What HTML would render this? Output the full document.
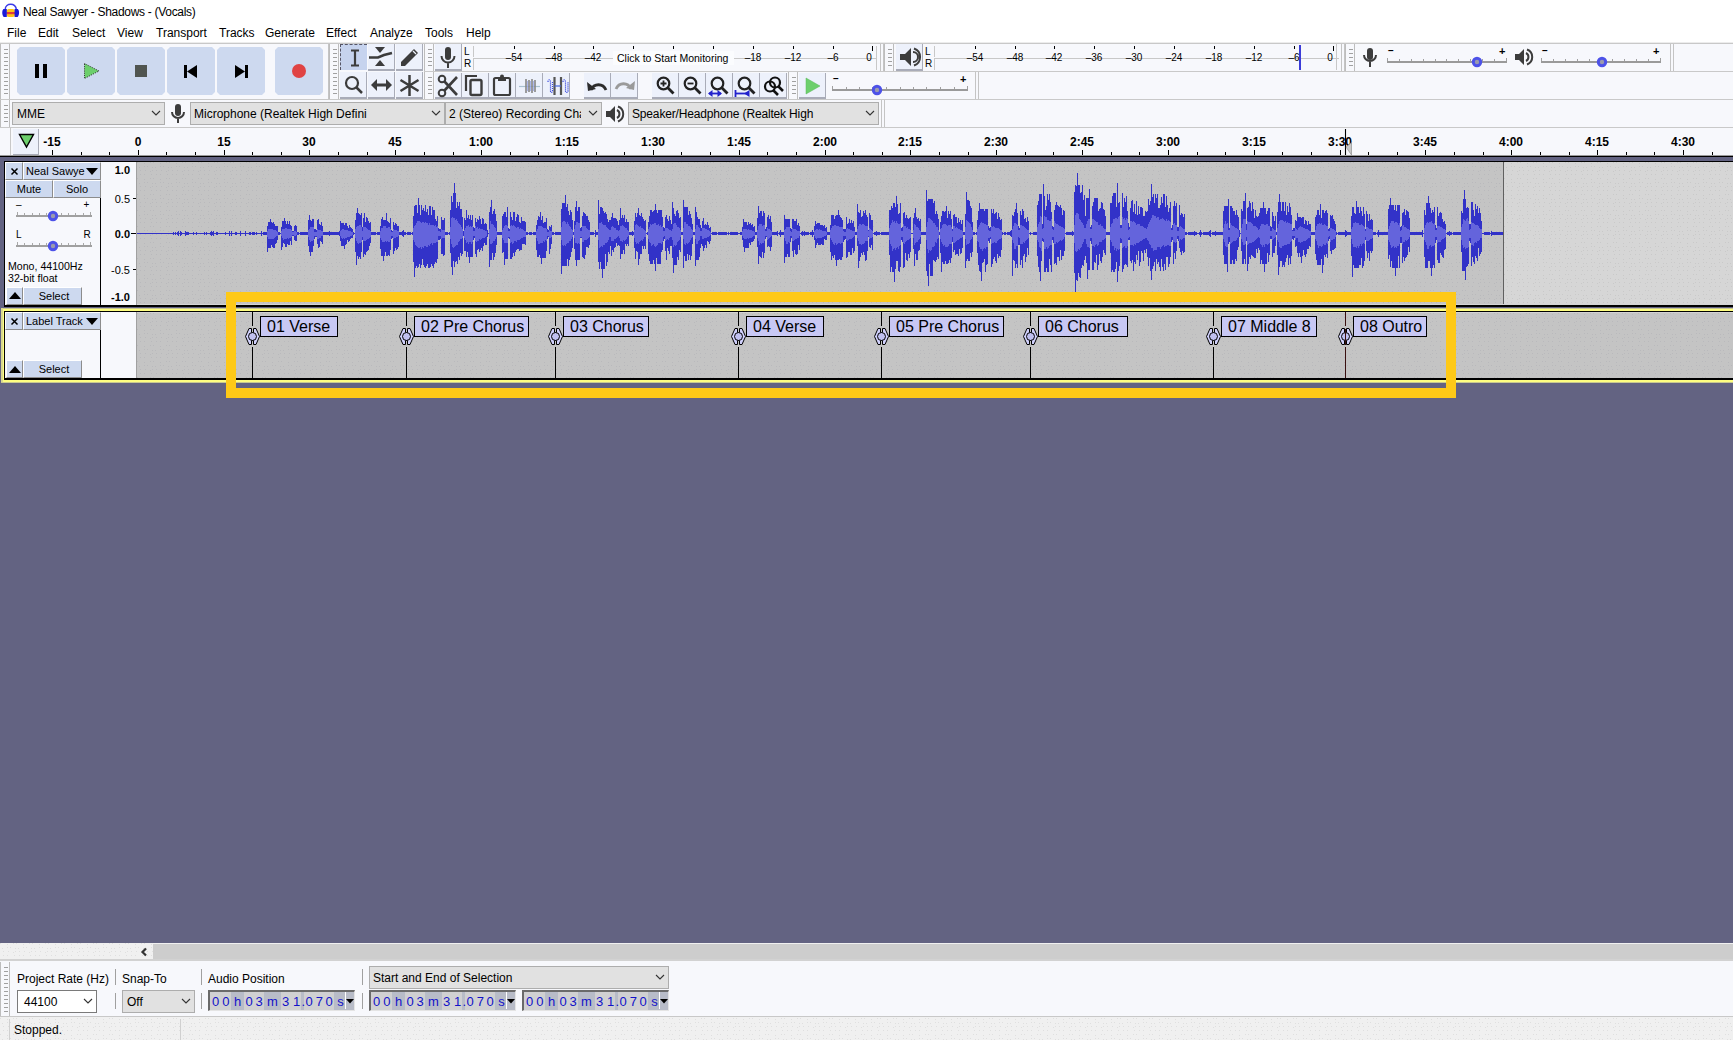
<!DOCTYPE html><html><head><meta charset='utf-8'><style>
*{box-sizing:border-box}
html,body{margin:0;padding:0}
body{width:1733px;height:1040px;overflow:hidden;position:relative;background:#636382;font-family:"Liberation Sans", sans-serif;color:#000}
.a{position:absolute}
.t{position:absolute;white-space:pre;line-height:1}
.btn{position:absolute;background:#cdd9ef;clip-path:polygon(3px 0,calc(100% - 3px) 0,100% 3px,100% calc(100% - 3px),calc(100% - 3px) 100%,3px 100%,0 calc(100% - 3px),0 3px)}
.tb{position:absolute;background:#edf1fb;border-right:1px solid #a9acb8;border-bottom:2px solid #a9acb8}
.grab{position:absolute;width:10px;border-left:1px solid #c8c8c8;border-right:2px solid #c8c8c8;background:repeating-linear-gradient(to bottom,transparent 0,transparent 2px,#9a9a9a 2px,#9a9a9a 3px,transparent 3px,transparent 4px);background-size:4px 100%;background-repeat:no-repeat;background-position:3px 0}
.combo{position:absolute;background:#e1e1e1;border:1px solid #adadad;font-size:12px}
.chev{position:absolute;width:6px;height:6px;border-right:1px solid #333;border-bottom:1px solid #333;transform:rotate(45deg)}
</style></head><body><div class='a' style='left:0;top:0;width:1733px;height:43px;background:#fff'></div><div class='t' style='left:23px;top:6px;font-size:12px;letter-spacing:-0.3px'>Neal Sawyer - Shadows - (Vocals)</div><svg class='a' style='left:1px;top:0px' width='20' height='18'><path d='M4.2 9.5 C4.2 2.5 15.3 2.5 15.3 9.5' stroke='#3a3ae8' stroke-width='1.5' fill='none'/><rect x='5.5' y='9' width='8.5' height='8' rx='2.5' fill='#fcc419'/><rect x='5.5' y='12' width='8.5' height='2.2' fill='#e0393e'/><path d='M2.5 9 C0.8 10.5 0.8 15 2.8 17 L5.8 17 L5.8 9 Z M16.8 9 C18.6 10.5 18.6 15 16.6 17 L13.6 17 L13.6 9 Z' fill='#1a1ad8'/></svg><div class='t' style='left:7px;top:27px;font-size:12px'>File</div><div class='t' style='left:38px;top:27px;font-size:12px'>Edit</div><div class='t' style='left:72px;top:27px;font-size:12px'>Select</div><div class='t' style='left:117px;top:27px;font-size:12px'>View</div><div class='t' style='left:156px;top:27px;font-size:12px'>Transport</div><div class='t' style='left:219px;top:27px;font-size:12px'>Tracks</div><div class='t' style='left:265px;top:27px;font-size:12px'>Generate</div><div class='t' style='left:326px;top:27px;font-size:12px'>Effect</div><div class='t' style='left:370px;top:27px;font-size:12px'>Analyze</div><div class='t' style='left:425px;top:27px;font-size:12px'>Tools</div><div class='t' style='left:466px;top:27px;font-size:12px'>Help</div><div class='a' style='left:0;top:43px;width:1733px;height:114px;background:#f7f8fc'></div><div class='a' style='left:0px;top:42px;width:1733px;height:1px;background:#ececec'></div><div class='a' style='left:0px;top:43px;width:1733px;height:1px;background:#c8c8c8'></div><div class='a' style='left:424px;top:71px;width:1309px;height:1px;background:#c9c9c9'></div><div class='a' style='left:0;top:99px;width:1733px;height:1px;background:#c9c9c9'></div><div class='a' style='left:0;top:127px;width:1733px;height:1px;background:#c9c9c9'></div><div class='a' style='left:0px;top:44px;width:10px;height:55px;border-left:1px solid #bdbdbd;border-right:1px solid #bdbdbd;'></div><div class='a' style='left:4px;top:49px;width:4px;height:1px;background:#a0a0a0'></div><div class='a' style='left:4px;top:53px;width:4px;height:1px;background:#a0a0a0'></div><div class='a' style='left:4px;top:57px;width:4px;height:1px;background:#a0a0a0'></div><div class='a' style='left:4px;top:61px;width:4px;height:1px;background:#a0a0a0'></div><div class='a' style='left:4px;top:65px;width:4px;height:1px;background:#a0a0a0'></div><div class='a' style='left:4px;top:69px;width:4px;height:1px;background:#a0a0a0'></div><div class='a' style='left:4px;top:73px;width:4px;height:1px;background:#a0a0a0'></div><div class='a' style='left:4px;top:77px;width:4px;height:1px;background:#a0a0a0'></div><div class='a' style='left:4px;top:81px;width:4px;height:1px;background:#a0a0a0'></div><div class='a' style='left:4px;top:85px;width:4px;height:1px;background:#a0a0a0'></div><div class='a' style='left:4px;top:89px;width:4px;height:1px;background:#a0a0a0'></div><div class='a' style='left:4px;top:93px;width:4px;height:1px;background:#a0a0a0'></div><div class='btn' style='left:17px;top:47px;width:48px;height:48px'></div><div class='btn' style='left:67px;top:47px;width:48px;height:48px'></div><div class='btn' style='left:117px;top:47px;width:48px;height:48px'></div><div class='btn' style='left:167px;top:47px;width:48px;height:48px'></div><div class='btn' style='left:217px;top:47px;width:48px;height:48px'></div><div class='btn' style='left:275px;top:47px;width:48px;height:48px'></div><div class='a' style='left:35px;top:64px;width:4px;height:14px;background:#000;'></div><div class='a' style='left:43px;top:64px;width:4px;height:14px;background:#000;'></div><svg class='a' style='left:83px;top:62px' width='18' height='18'><polygon points='1.5,1.5 16,9 1.5,16.5' fill='#6ccf6c' stroke='#333' stroke-width='1' stroke-dasharray='1,1.2'/></svg><div class='a' style='left:135px;top:65px;width:12px;height:12px;background:#505550;'></div><div class='a' style='left:184px;top:65px;width:3px;height:13px;background:#000;'></div><svg class='a' style='left:187px;top:65px' width='11' height='13'><polygon points='10,0 10,13 0,6.5' fill='#000'/></svg><svg class='a' style='left:235px;top:65px' width='11' height='13'><polygon points='0,0 0,13 10,6.5' fill='#000'/></svg><div class='a' style='left:245px;top:65px;width:3px;height:13px;background:#000;'></div><svg class='a' style='left:291px;top:63px' width='16' height='16'><circle cx='8' cy='8' r='7' fill='#e04343'/></svg><div class='a' style='left:328px;top:44px;width:2px;height:55px;background:#c4c4c4'></div><div class='a' style='left:329px;top:44px;width:10px;height:55px;border-left:1px solid #bdbdbd;border-right:1px solid #bdbdbd;'></div><div class='a' style='left:333px;top:49px;width:4px;height:1px;background:#a0a0a0'></div><div class='a' style='left:333px;top:53px;width:4px;height:1px;background:#a0a0a0'></div><div class='a' style='left:333px;top:57px;width:4px;height:1px;background:#a0a0a0'></div><div class='a' style='left:333px;top:61px;width:4px;height:1px;background:#a0a0a0'></div><div class='a' style='left:333px;top:65px;width:4px;height:1px;background:#a0a0a0'></div><div class='a' style='left:333px;top:69px;width:4px;height:1px;background:#a0a0a0'></div><div class='a' style='left:333px;top:73px;width:4px;height:1px;background:#a0a0a0'></div><div class='a' style='left:333px;top:77px;width:4px;height:1px;background:#a0a0a0'></div><div class='a' style='left:333px;top:81px;width:4px;height:1px;background:#a0a0a0'></div><div class='a' style='left:333px;top:85px;width:4px;height:1px;background:#a0a0a0'></div><div class='a' style='left:333px;top:89px;width:4px;height:1px;background:#a0a0a0'></div><div class='a' style='left:333px;top:93px;width:4px;height:1px;background:#a0a0a0'></div><div class='a' style='left:340px;top:44px;width:27px;height:26px;background:#c6d3ee;border-left:1px dashed #556;border-top:1px dashed #556'></div><div class='tb' style='left:368px;top:44px;width:27px;height:27px'></div><div class='tb' style='left:396px;top:44px;width:27px;height:27px'></div><div class='tb' style='left:340px;top:72px;width:27px;height:27px'></div><div class='tb' style='left:368px;top:72px;width:27px;height:27px'></div><div class='tb' style='left:396px;top:72px;width:27px;height:27px'></div><svg class='a' style='left:340px;top:44px' width='27' height='26'><path d='M11 6.5H19M11 21.5H19M15 6.5V21.5' stroke='#3c3c3c' stroke-width='2.2' fill='none'/></svg><svg class='a' style='left:368px;top:44px' width='27' height='27'><polygon points='7,3 17,3 12,9' fill='#3c3c3c'/><polygon points='7,22 17,22 12,16' fill='#3c3c3c'/><path d='M1 13.5 H10 L16 11 L24 9' stroke='#3c3c3c' stroke-width='2.5' fill='none'/></svg><svg class='a' style='left:396px;top:44px' width='27' height='27'><path d='M5 22 L5 18 L18 5 L22 9 L9 22 Z' fill='#3c3c3c'/><path d='M17 7 L20 10' stroke='#edf1fb' stroke-width='1.2'/></svg><svg class='a' style='left:340px;top:72px' width='27' height='27'><circle cx='12' cy='11' r='6' stroke='#3c3c3c' stroke-width='2.2' fill='none'/><path d='M16.5 15.5 L22 21' stroke='#3c3c3c' stroke-width='2.5'/></svg><svg class='a' style='left:368px;top:72px' width='27' height='27'><polygon points='3,13 9,7 9,19' fill='#3c3c3c'/><polygon points='24,13 18,7 18,19' fill='#3c3c3c'/><rect x='8' y='11.5' width='11' height='3' fill='#3c3c3c'/></svg><svg class='a' style='left:396px;top:72px' width='27' height='27'><path d='M13.5 3V24M4.5 8L22.5 19M22.5 8L4.5 19' stroke='#3c3c3c' stroke-width='2.5'/></svg><div class='a' style='left:424px;top:44px;width:10px;height:27px;border-left:1px solid #bdbdbd;border-right:1px solid #bdbdbd;'></div><div class='a' style='left:428px;top:49px;width:4px;height:1px;background:#a0a0a0'></div><div class='a' style='left:428px;top:53px;width:4px;height:1px;background:#a0a0a0'></div><div class='a' style='left:428px;top:57px;width:4px;height:1px;background:#a0a0a0'></div><div class='a' style='left:428px;top:61px;width:4px;height:1px;background:#a0a0a0'></div><div class='a' style='left:428px;top:65px;width:4px;height:1px;background:#a0a0a0'></div><div class='tb' style='left:435px;top:44px;width:27px;height:27px'></div><svg class='a' style='left:435px;top:44px' width='27' height='27'><rect x='10' y='3' width='6' height='13' rx='3' fill='#3c3c3c'/><path d='M6.5 12 A6.5 6.5 0 0 0 19.5 12 M13 19V24' stroke='#3c3c3c' stroke-width='2' fill='none'/></svg><div class='t' style='left:464px;top:47px;font-size:10px;'>L</div><div class='t' style='left:464px;top:59px;font-size:10px;'>R</div><div class='a' style='left:473px;top:46px;width:1px;height:11px;background:#c8c8c8'></div><div class='a' style='left:473px;top:59px;width:1px;height:11px;background:#c8c8c8'></div><div class='a' style='left:473px;top:58px;width:403px;height:1px;background:#c8c8c8'></div><div class='a' style='left:514px;top:46px;width:1px;height:3px;background:#000'></div><div class='t' style='left:499px;top:53px;width:30px;text-align:center;font-size:10px;background:transparent'>&#8211;54</div><div class='a' style='left:554px;top:46px;width:1px;height:3px;background:#000'></div><div class='t' style='left:539px;top:53px;width:30px;text-align:center;font-size:10px;background:transparent'>&#8211;48</div><div class='a' style='left:593px;top:46px;width:1px;height:3px;background:#000'></div><div class='t' style='left:578px;top:53px;width:30px;text-align:center;font-size:10px;background:transparent'>&#8211;42</div><div class='a' style='left:876px;top:46px;width:1px;height:24px;background:#c8c8c8'></div><div class='a' style='left:613px;top:51px;width:121px;height:14px;background:#fbfcfe;'></div><div class='t' style='left:617px;top:53px;font-size:10.5px;'>Click to Start Monitoring</div><div class='a' style='left:753px;top:46px;width:1px;height:3px;background:#000'></div><div class='t' style='left:738px;top:53px;width:30px;text-align:center;font-size:10px'>&#8211;18</div><div class='a' style='left:793px;top:46px;width:1px;height:3px;background:#000'></div><div class='t' style='left:778px;top:53px;width:30px;text-align:center;font-size:10px'>&#8211;12</div><div class='a' style='left:833px;top:46px;width:1px;height:3px;background:#000'></div><div class='t' style='left:818px;top:53px;width:30px;text-align:center;font-size:10px'>&#8211;6</div><div class='a' style='left:872px;top:46px;width:1px;height:5px;background:#000'></div><div class='t' style='left:854px;top:53px;width:30px;text-align:center;font-size:10px'>0</div><div class='a' style='left:633px;top:46px;width:1px;height:3px;background:#000'></div><div class='a' style='left:673px;top:46px;width:1px;height:3px;background:#000'></div><div class='a' style='left:713px;top:46px;width:1px;height:3px;background:#000'></div><div class='a' style='left:880px;top:44px;width:1px;height:27px;background:#c4c4c4'></div><div class='a' style='left:883px;top:44px;width:1px;height:27px;background:#c4c4c4'></div><div class='a' style='left:884px;top:44px;width:10px;height:27px;border-left:1px solid #bdbdbd;border-right:1px solid #bdbdbd;'></div><div class='a' style='left:888px;top:49px;width:4px;height:1px;background:#a0a0a0'></div><div class='a' style='left:888px;top:53px;width:4px;height:1px;background:#a0a0a0'></div><div class='a' style='left:888px;top:57px;width:4px;height:1px;background:#a0a0a0'></div><div class='a' style='left:888px;top:61px;width:4px;height:1px;background:#a0a0a0'></div><div class='a' style='left:888px;top:65px;width:4px;height:1px;background:#a0a0a0'></div><div class='tb' style='left:896px;top:44px;width:27px;height:27px'></div><svg class='a' style='left:896px;top:44px' width='27' height='27'><polygon points='4,10 9,10 15,4 15,22 9,16 4,16' fill='#3c3c3c'/><path d='M17 8 A5 5 0 0 1 17 18 M18 4.5 A9 9 0 0 1 18 21.5' stroke='#3c3c3c' stroke-width='2' fill='none'/></svg><div class='t' style='left:925px;top:47px;font-size:10px;'>L</div><div class='t' style='left:925px;top:59px;font-size:10px;'>R</div><div class='a' style='left:934px;top:46px;width:1px;height:11px;background:#c8c8c8'></div><div class='a' style='left:934px;top:59px;width:1px;height:11px;background:#c8c8c8'></div><div class='a' style='left:934px;top:58px;width:403px;height:1px;background:#c8c8c8'></div><div class='a' style='left:975px;top:46px;width:1px;height:3px;background:#000'></div><div class='t' style='left:960px;top:53px;width:30px;text-align:center;font-size:10px'>&#8211;54</div><div class='a' style='left:1015px;top:46px;width:1px;height:3px;background:#000'></div><div class='t' style='left:1000px;top:53px;width:30px;text-align:center;font-size:10px'>&#8211;48</div><div class='a' style='left:1054px;top:46px;width:1px;height:3px;background:#000'></div><div class='t' style='left:1039px;top:53px;width:30px;text-align:center;font-size:10px'>&#8211;42</div><div class='a' style='left:1094px;top:46px;width:1px;height:3px;background:#000'></div><div class='t' style='left:1079px;top:53px;width:30px;text-align:center;font-size:10px'>&#8211;36</div><div class='a' style='left:1134px;top:46px;width:1px;height:3px;background:#000'></div><div class='t' style='left:1119px;top:53px;width:30px;text-align:center;font-size:10px'>&#8211;30</div><div class='a' style='left:1174px;top:46px;width:1px;height:3px;background:#000'></div><div class='t' style='left:1159px;top:53px;width:30px;text-align:center;font-size:10px'>&#8211;24</div><div class='a' style='left:1214px;top:46px;width:1px;height:3px;background:#000'></div><div class='t' style='left:1199px;top:53px;width:30px;text-align:center;font-size:10px'>&#8211;18</div><div class='a' style='left:1254px;top:46px;width:1px;height:3px;background:#000'></div><div class='t' style='left:1239px;top:53px;width:30px;text-align:center;font-size:10px'>&#8211;12</div><div class='a' style='left:1294px;top:46px;width:1px;height:3px;background:#000'></div><div class='t' style='left:1279px;top:53px;width:30px;text-align:center;font-size:10px'>&#8211;6</div><div class='a' style='left:1333px;top:46px;width:1px;height:5px;background:#000'></div><div class='t' style='left:1315px;top:53px;width:30px;text-align:center;font-size:10px'>0</div><div class='a' style='left:1299px;top:45px;width:2px;height:25px;background:#3b3bd8'></div><div class='a' style='left:1336px;top:44px;width:1px;height:26px;background:#c8c8c8'></div><div class='a' style='left:1336px;top:58px;width:3px;height:1px;background:#c8c8c8'></div><div class='a' style='left:1341px;top:44px;width:1px;height:27px;background:#c4c4c4'></div><div class='a' style='left:1344px;top:44px;width:2px;height:27px;background:#c4c4c4'></div><div class='a' style='left:1345px;top:44px;width:10px;height:27px;border-left:1px solid #bdbdbd;border-right:1px solid #bdbdbd;'></div><div class='a' style='left:1349px;top:49px;width:4px;height:1px;background:#a0a0a0'></div><div class='a' style='left:1349px;top:53px;width:4px;height:1px;background:#a0a0a0'></div><div class='a' style='left:1349px;top:57px;width:4px;height:1px;background:#a0a0a0'></div><div class='a' style='left:1349px;top:61px;width:4px;height:1px;background:#a0a0a0'></div><div class='a' style='left:1349px;top:65px;width:4px;height:1px;background:#a0a0a0'></div><svg class='a' style='left:1361px;top:44px' width='18' height='27'><rect x='6' y='4' width='6' height='12' rx='3' fill='#3c3c3c'/><path d='M3 11 A6 6 0 0 0 15 11 M9 18V23' stroke='#3c3c3c' stroke-width='2' fill='none'/></svg><div class='a' style='left:1387px;top:61px;width:120px;height:2px;background:#9a9a9a'></div><div class='a' style='left:1387px;top:58px;width:1px;height:3px;background:#a0a0a0'></div><div class='a' style='left:1399px;top:59px;width:1px;height:2px;background:#a0a0a0'></div><div class='a' style='left:1411px;top:59px;width:1px;height:2px;background:#a0a0a0'></div><div class='a' style='left:1423px;top:59px;width:1px;height:2px;background:#a0a0a0'></div><div class='a' style='left:1435px;top:59px;width:1px;height:2px;background:#a0a0a0'></div><div class='a' style='left:1446px;top:59px;width:1px;height:2px;background:#a0a0a0'></div><div class='a' style='left:1458px;top:59px;width:1px;height:2px;background:#a0a0a0'></div><div class='a' style='left:1470px;top:59px;width:1px;height:2px;background:#a0a0a0'></div><div class='a' style='left:1482px;top:59px;width:1px;height:2px;background:#a0a0a0'></div><div class='a' style='left:1494px;top:59px;width:1px;height:2px;background:#a0a0a0'></div><div class='a' style='left:1506px;top:58px;width:1px;height:3px;background:#a0a0a0'></div><div class='t' style='left:1388px;top:46px;font-size:10px;font-weight:bold'>&#8211;</div><div class='t' style='left:1499px;top:45.5px;font-size:11px;font-weight:bold'>+</div><svg class='a' style='left:1471px;top:56px' width='12' height='12'><circle cx='6' cy='6' r='3.7' stroke='#4d52e8' stroke-width='3' fill='#9a9aae'/></svg><svg class='a' style='left:1512px;top:44px' width='22' height='27'><polygon points='3,10 7,10 12,5 12,21 7,16 3,16' fill='#3c3c3c'/><path d='M14 9 A4.5 4.5 0 0 1 14 17 M15 5.5 A8 8 0 0 1 15 20.5' stroke='#3c3c3c' stroke-width='2' fill='none'/></svg><div class='a' style='left:1541px;top:61px;width:120px;height:2px;background:#9a9a9a'></div><div class='a' style='left:1541px;top:58px;width:1px;height:3px;background:#a0a0a0'></div><div class='a' style='left:1553px;top:59px;width:1px;height:2px;background:#a0a0a0'></div><div class='a' style='left:1565px;top:59px;width:1px;height:2px;background:#a0a0a0'></div><div class='a' style='left:1577px;top:59px;width:1px;height:2px;background:#a0a0a0'></div><div class='a' style='left:1589px;top:59px;width:1px;height:2px;background:#a0a0a0'></div><div class='a' style='left:1600px;top:59px;width:1px;height:2px;background:#a0a0a0'></div><div class='a' style='left:1612px;top:59px;width:1px;height:2px;background:#a0a0a0'></div><div class='a' style='left:1624px;top:59px;width:1px;height:2px;background:#a0a0a0'></div><div class='a' style='left:1636px;top:59px;width:1px;height:2px;background:#a0a0a0'></div><div class='a' style='left:1648px;top:59px;width:1px;height:2px;background:#a0a0a0'></div><div class='a' style='left:1660px;top:58px;width:1px;height:3px;background:#a0a0a0'></div><div class='t' style='left:1542px;top:46px;font-size:10px;font-weight:bold'>&#8211;</div><div class='t' style='left:1653px;top:45.5px;font-size:11px;font-weight:bold'>+</div><svg class='a' style='left:1596px;top:56px' width='12' height='12'><circle cx='6' cy='6' r='3.7' stroke='#4d52e8' stroke-width='3' fill='#9a9aae'/></svg><div class='a' style='left:1670px;top:44px;width:1px;height:27px;background:#c4c4c4'></div><div class='a' style='left:1673px;top:44px;width:1px;height:27px;background:#c4c4c4'></div><div class='a' style='left:424px;top:72px;width:10px;height:27px;border-left:1px solid #bdbdbd;border-right:1px solid #bdbdbd;'></div><div class='a' style='left:428px;top:77px;width:4px;height:1px;background:#a0a0a0'></div><div class='a' style='left:428px;top:81px;width:4px;height:1px;background:#a0a0a0'></div><div class='a' style='left:428px;top:85px;width:4px;height:1px;background:#a0a0a0'></div><div class='a' style='left:428px;top:89px;width:4px;height:1px;background:#a0a0a0'></div><div class='a' style='left:428px;top:93px;width:4px;height:1px;background:#a0a0a0'></div><div class='tb' style='left:435px;top:73px;width:27px;height:26px'></div><div class='tb' style='left:462px;top:73px;width:27px;height:26px'></div><div class='tb' style='left:489px;top:73px;width:27px;height:26px'></div><div class='tb' style='left:516px;top:73px;width:27px;height:26px'></div><div class='tb' style='left:543px;top:73px;width:27px;height:26px'></div><div class='tb' style='left:584px;top:73px;width:27px;height:26px'></div><div class='tb' style='left:611px;top:73px;width:27px;height:26px'></div><div class='tb' style='left:652px;top:73px;width:27px;height:26px'></div><div class='tb' style='left:679px;top:73px;width:27px;height:26px'></div><div class='tb' style='left:706px;top:73px;width:27px;height:26px'></div><div class='tb' style='left:733px;top:73px;width:27px;height:26px'></div><div class='tb' style='left:760px;top:73px;width:27px;height:26px'></div><svg class='a' style='left:435px;top:73px' width='27' height='26'><circle cx='7' cy='6' r='3.3' stroke='#3c3c3c' stroke-width='2' fill='none'/><circle cx='7' cy='20' r='3.3' stroke='#3c3c3c' stroke-width='2' fill='none'/><path d='M9.5 8.5 L22 22 M9.5 17.5 L22 4' stroke='#3c3c3c' stroke-width='2.6'/></svg><svg class='a' style='left:462px;top:73px' width='27' height='26'><path d='M4 18 V3 H15' stroke='#3c3c3c' stroke-width='2.2' fill='none'/><rect x='8.5' y='7' width='11' height='15' rx='1.5' stroke='#3c3c3c' stroke-width='2.4' fill='none'/></svg><svg class='a' style='left:489px;top:73px' width='27' height='26'><rect x='5' y='5' width='16' height='17' rx='1.5' stroke='#3c3c3c' stroke-width='2.2' fill='none'/><rect x='9' y='4' width='8' height='4' fill='#3c3c3c'/><circle cx='13' cy='3.5' r='2' fill='#3c3c3c'/></svg><svg class='a' style='left:516px;top:73px' width='27' height='26'><path d='M3 13.5 H24' stroke='#a8c0d0' stroke-width='1.2'/><path d='M10 6V20 M13 7V19 M16 6V20 M19 7V19' stroke='#858585' stroke-width='1.6'/><path d='M11.5 8V18 M14.5 8V18 M17.5 8V18' stroke='#9aa8e8' stroke-width='0.8'/></svg><svg class='a' style='left:543px;top:73px' width='27' height='26'><path d='M11.5 4V22 M18 4V22' stroke='#555' stroke-width='2.2'/><path d='M11.5 13 H18' stroke='#4466dd' stroke-width='1.2'/><path d='M5 9 C5 6 7.5 6 7.5 9 V18 C7.5 20 9.5 20 9.5 18 V9 M20 9 C20 6 22.5 6 22.5 9 V18 C22.5 20 25 20 25 18 V9' stroke='#4050e0' stroke-width='1.2' fill='none' stroke-dasharray='1.2,0.8'/></svg><svg class='a' style='left:584px;top:73px' width='27' height='26'><path d='M7 17 C10 10 19 10 22 17' stroke='#2c2c2c' stroke-width='2.8' fill='none'/><polygon points='3,9 4,18 12,16' fill='#2c2c2c'/></svg><svg class='a' style='left:611px;top:73px' width='27' height='26'><path d='M5 16 C8 9 17 9 20 16' stroke='#9a9a9a' stroke-width='2.8' fill='none'/><polygon points='24,8 23,17 15,15' fill='#9a9a9a'/></svg><svg class='a' style='left:652px;top:73px' width='27' height='26'><circle cx='11.5' cy='10.5' r='5.8' stroke='#222' stroke-width='2.2' fill='none'/><path d='M15.8 14.8 L21.5 20.5' stroke='#222' stroke-width='2.8'/><path d='M11.5 7.5V13.5M8.5 10.5H14.5' stroke='#222' stroke-width='1.8'/></svg><svg class='a' style='left:679px;top:73px' width='27' height='26'><circle cx='11.5' cy='10.5' r='5.8' stroke='#222' stroke-width='2.2' fill='none'/><path d='M15.8 14.8 L21.5 20.5' stroke='#222' stroke-width='2.8'/><path d='M8.5 10.5H14.5' stroke='#222' stroke-width='1.8'/></svg><svg class='a' style='left:706px;top:73px' width='27' height='26'><circle cx='11.5' cy='10.5' r='5.8' stroke='#222' stroke-width='2.2' fill='none'/><path d='M15.8 14.8 L21.5 20.5' stroke='#222' stroke-width='2.8'/><path d='M3 20.5H15' stroke='#2222cc' stroke-width='1.8'/><polygon points='2,20.5 6.5,17 6.5,24' fill='#2222cc'/><polygon points='16,20.5 11.5,17 11.5,24' fill='#2222cc'/></svg><svg class='a' style='left:733px;top:73px' width='27' height='26'><circle cx='11.5' cy='10.5' r='5.8' stroke='#222' stroke-width='2.2' fill='none'/><path d='M15.8 14.8 L21.5 20.5' stroke='#222' stroke-width='2.8'/><path d='M2 20.5H14' stroke='#2222cc' stroke-width='1.8'/><path d='M2.5 17V24' stroke='#2222cc' stroke-width='1.8'/><polygon points='16.5,17 16.5,24 11,20.5' fill='#2222cc'/></svg><svg class='a' style='left:760px;top:73px' width='27' height='26'><circle cx='15' cy='9.5' r='5' stroke='#111' stroke-width='2.2' fill='none'/><circle cx='10' cy='13.5' r='5' stroke='#111' stroke-width='2.2' fill='none'/><path d='M18 13 L23 18 M13 17 L18 22' stroke='#111' stroke-width='2.6'/></svg><div class='a' style='left:788px;top:72px;width:10px;height:27px;border-left:1px solid #bdbdbd;border-right:1px solid #bdbdbd;'></div><div class='a' style='left:792px;top:77px;width:4px;height:1px;background:#a0a0a0'></div><div class='a' style='left:792px;top:81px;width:4px;height:1px;background:#a0a0a0'></div><div class='a' style='left:792px;top:85px;width:4px;height:1px;background:#a0a0a0'></div><div class='a' style='left:792px;top:89px;width:4px;height:1px;background:#a0a0a0'></div><div class='a' style='left:792px;top:93px;width:4px;height:1px;background:#a0a0a0'></div><div class='tb' style='left:799px;top:73px;width:27px;height:26px'></div><svg class='a' style='left:799px;top:73px' width='27' height='26'><polygon points='7,5 21,13 7,21' fill='#6ccf6c' stroke='#58b858' stroke-width='0.5'/></svg><div class='a' style='left:832px;top:89px;width:136px;height:2px;background:#9a9a9a'></div><div class='a' style='left:832px;top:86px;width:1px;height:3px;background:#a0a0a0'></div><div class='a' style='left:846px;top:87px;width:1px;height:2px;background:#a0a0a0'></div><div class='a' style='left:859px;top:87px;width:1px;height:2px;background:#a0a0a0'></div><div class='a' style='left:872px;top:87px;width:1px;height:2px;background:#a0a0a0'></div><div class='a' style='left:886px;top:87px;width:1px;height:2px;background:#a0a0a0'></div><div class='a' style='left:900px;top:87px;width:1px;height:2px;background:#a0a0a0'></div><div class='a' style='left:913px;top:87px;width:1px;height:2px;background:#a0a0a0'></div><div class='a' style='left:926px;top:87px;width:1px;height:2px;background:#a0a0a0'></div><div class='a' style='left:940px;top:87px;width:1px;height:2px;background:#a0a0a0'></div><div class='a' style='left:954px;top:87px;width:1px;height:2px;background:#a0a0a0'></div><div class='a' style='left:967px;top:86px;width:1px;height:3px;background:#a0a0a0'></div><div class='t' style='left:833px;top:74px;font-size:10px;font-weight:bold'>&#8211;</div><div class='t' style='left:960px;top:73.5px;font-size:11px;font-weight:bold'>+</div><svg class='a' style='left:871px;top:84px' width='12' height='12'><circle cx='6' cy='6' r='3.7' stroke='#4d52e8' stroke-width='3' fill='#9a9aae'/></svg><div class='a' style='left:975px;top:72px;width:1px;height:27px;background:#c4c4c4'></div><div class='a' style='left:978px;top:72px;width:1px;height:27px;background:#c4c4c4'></div><div class='a' style='left:0px;top:100px;width:10px;height:27px;border-left:1px solid #bdbdbd;border-right:1px solid #bdbdbd;'></div><div class='a' style='left:4px;top:105px;width:4px;height:1px;background:#a0a0a0'></div><div class='a' style='left:4px;top:109px;width:4px;height:1px;background:#a0a0a0'></div><div class='a' style='left:4px;top:113px;width:4px;height:1px;background:#a0a0a0'></div><div class='a' style='left:4px;top:117px;width:4px;height:1px;background:#a0a0a0'></div><div class='a' style='left:4px;top:121px;width:4px;height:1px;background:#a0a0a0'></div><div class='a' style='left:12px;top:102px;width:153px;height:23px;background:#e1e1e1;border:1px solid #adadad;overflow:hidden'><div class='a' style='left:0;top:0;width:131px;height:21px;overflow:hidden'><div class='t' style='left:4px;top:5.0px;font-size:12px;'>MME</div></div></div><svg class='a' style='left:151px;top:110px' width='10' height='6'><path d='M1 1 L5 5 L9 1' stroke='#333' stroke-width='1.1' fill='none'/></svg><svg class='a' style='left:168px;top:102px' width='20' height='24'><rect x='7' y='2' width='6' height='12' rx='3' fill='#3c3c3c'/><path d='M4 10 A6 6 0 0 0 16 10 M10 16V21' stroke='#3c3c3c' stroke-width='2' fill='none'/></svg><div class='a' style='left:190px;top:102px;width:255px;height:23px;background:#e1e1e1;border:1px solid #adadad;overflow:hidden'><div class='a' style='left:0;top:0;width:233px;height:21px;overflow:hidden'><div class='t' style='left:3px;top:5.0px;font-size:12px;'>Microphone (Realtek High Defini</div></div></div><svg class='a' style='left:431px;top:110px' width='10' height='6'><path d='M1 1 L5 5 L9 1' stroke='#333' stroke-width='1.1' fill='none'/></svg><div class='a' style='left:445px;top:102px;width:157px;height:23px;background:#e1e1e1;border:1px solid #adadad;overflow:hidden'><div class='a' style='left:0;top:0;width:135px;height:21px;overflow:hidden'><div class='t' style='left:3px;top:5.0px;font-size:12px;'>2 (Stereo) Recording Chai</div></div></div><svg class='a' style='left:588px;top:110px' width='10' height='6'><path d='M1 1 L5 5 L9 1' stroke='#333' stroke-width='1.1' fill='none'/></svg><svg class='a' style='left:603px;top:102px' width='22' height='24'><polygon points='3,9 7,9 12,4 12,20 7,15 3,15' fill='#3c3c3c'/><path d='M14 8 A4.5 4.5 0 0 1 14 16 M15 4.5 A8 8 0 0 1 15 19.5' stroke='#3c3c3c' stroke-width='2' fill='none'/></svg><div class='a' style='left:628px;top:102px;width:251px;height:23px;background:#e1e1e1;border:1px solid #adadad;overflow:hidden'><div class='a' style='left:0;top:0;width:229px;height:21px;overflow:hidden'><div class='t' style='left:3px;top:5.0px;font-size:12px;letter-spacing:-0.16px'>Speaker/Headphone (Realtek High</div></div></div><svg class='a' style='left:865px;top:110px' width='10' height='6'><path d='M1 1 L5 5 L9 1' stroke='#333' stroke-width='1.1' fill='none'/></svg><div class='a' style='left:881px;top:100px;width:1px;height:27px;background:#c4c4c4'></div><div class='a' style='left:884px;top:100px;width:1px;height:27px;background:#c4c4c4'></div><div class='a' style='left:0px;top:128px;width:1733px;height:29px;background:#f7f8fc;'></div><div class='a' style='left:10px;top:128px;width:1px;height:28px;background:#c8c8c8'></div><div class='tb' style='left:13px;top:129px;width:26px;height:26px;border-bottom:1px solid #a9acb8'></div><svg class='a' style='left:18px;top:133px' width='18' height='16'><polygon points='1.5,1.5 15.5,1.5 8.5,14' fill='#6ccf6c' stroke='#000' stroke-width='1.4' stroke-linejoin='miter'/></svg><div class='a' style='left:52px;top:150px;width:1px;height:5px;background:#000'></div><div class='t' style='left:27px;top:135.5px;width:50px;text-align:center;font-size:12px;font-weight:bold'>-15</div><div class='a' style='left:81px;top:152px;width:1px;height:3px;background:#000'></div><div class='a' style='left:109px;top:152px;width:1px;height:3px;background:#000'></div><div class='a' style='left:138px;top:150px;width:1px;height:5px;background:#000'></div><div class='t' style='left:113px;top:135.5px;width:50px;text-align:center;font-size:12px;font-weight:bold'>0</div><div class='a' style='left:166px;top:152px;width:1px;height:3px;background:#000'></div><div class='a' style='left:195px;top:152px;width:1px;height:3px;background:#000'></div><div class='a' style='left:224px;top:150px;width:1px;height:5px;background:#000'></div><div class='t' style='left:199px;top:135.5px;width:50px;text-align:center;font-size:12px;font-weight:bold'>15</div><div class='a' style='left:252px;top:152px;width:1px;height:3px;background:#000'></div><div class='a' style='left:281px;top:152px;width:1px;height:3px;background:#000'></div><div class='a' style='left:309px;top:150px;width:1px;height:5px;background:#000'></div><div class='t' style='left:284px;top:135.5px;width:50px;text-align:center;font-size:12px;font-weight:bold'>30</div><div class='a' style='left:338px;top:152px;width:1px;height:3px;background:#000'></div><div class='a' style='left:367px;top:152px;width:1px;height:3px;background:#000'></div><div class='a' style='left:395px;top:150px;width:1px;height:5px;background:#000'></div><div class='t' style='left:370px;top:135.5px;width:50px;text-align:center;font-size:12px;font-weight:bold'>45</div><div class='a' style='left:424px;top:152px;width:1px;height:3px;background:#000'></div><div class='a' style='left:453px;top:152px;width:1px;height:3px;background:#000'></div><div class='a' style='left:481px;top:150px;width:1px;height:5px;background:#000'></div><div class='t' style='left:456px;top:135.5px;width:50px;text-align:center;font-size:12px;font-weight:bold'>1:00</div><div class='a' style='left:510px;top:152px;width:1px;height:3px;background:#000'></div><div class='a' style='left:538px;top:152px;width:1px;height:3px;background:#000'></div><div class='a' style='left:567px;top:150px;width:1px;height:5px;background:#000'></div><div class='t' style='left:542px;top:135.5px;width:50px;text-align:center;font-size:12px;font-weight:bold'>1:15</div><div class='a' style='left:596px;top:152px;width:1px;height:3px;background:#000'></div><div class='a' style='left:624px;top:152px;width:1px;height:3px;background:#000'></div><div class='a' style='left:653px;top:150px;width:1px;height:5px;background:#000'></div><div class='t' style='left:628px;top:135.5px;width:50px;text-align:center;font-size:12px;font-weight:bold'>1:30</div><div class='a' style='left:681px;top:152px;width:1px;height:3px;background:#000'></div><div class='a' style='left:710px;top:152px;width:1px;height:3px;background:#000'></div><div class='a' style='left:739px;top:150px;width:1px;height:5px;background:#000'></div><div class='t' style='left:714px;top:135.5px;width:50px;text-align:center;font-size:12px;font-weight:bold'>1:45</div><div class='a' style='left:767px;top:152px;width:1px;height:3px;background:#000'></div><div class='a' style='left:796px;top:152px;width:1px;height:3px;background:#000'></div><div class='a' style='left:825px;top:150px;width:1px;height:5px;background:#000'></div><div class='t' style='left:800px;top:135.5px;width:50px;text-align:center;font-size:12px;font-weight:bold'>2:00</div><div class='a' style='left:853px;top:152px;width:1px;height:3px;background:#000'></div><div class='a' style='left:882px;top:152px;width:1px;height:3px;background:#000'></div><div class='a' style='left:910px;top:150px;width:1px;height:5px;background:#000'></div><div class='t' style='left:885px;top:135.5px;width:50px;text-align:center;font-size:12px;font-weight:bold'>2:15</div><div class='a' style='left:939px;top:152px;width:1px;height:3px;background:#000'></div><div class='a' style='left:968px;top:152px;width:1px;height:3px;background:#000'></div><div class='a' style='left:996px;top:150px;width:1px;height:5px;background:#000'></div><div class='t' style='left:971px;top:135.5px;width:50px;text-align:center;font-size:12px;font-weight:bold'>2:30</div><div class='a' style='left:1025px;top:152px;width:1px;height:3px;background:#000'></div><div class='a' style='left:1053px;top:152px;width:1px;height:3px;background:#000'></div><div class='a' style='left:1082px;top:150px;width:1px;height:5px;background:#000'></div><div class='t' style='left:1057px;top:135.5px;width:50px;text-align:center;font-size:12px;font-weight:bold'>2:45</div><div class='a' style='left:1111px;top:152px;width:1px;height:3px;background:#000'></div><div class='a' style='left:1139px;top:152px;width:1px;height:3px;background:#000'></div><div class='a' style='left:1168px;top:150px;width:1px;height:5px;background:#000'></div><div class='t' style='left:1143px;top:135.5px;width:50px;text-align:center;font-size:12px;font-weight:bold'>3:00</div><div class='a' style='left:1197px;top:152px;width:1px;height:3px;background:#000'></div><div class='a' style='left:1225px;top:152px;width:1px;height:3px;background:#000'></div><div class='a' style='left:1254px;top:150px;width:1px;height:5px;background:#000'></div><div class='t' style='left:1229px;top:135.5px;width:50px;text-align:center;font-size:12px;font-weight:bold'>3:15</div><div class='a' style='left:1282px;top:152px;width:1px;height:3px;background:#000'></div><div class='a' style='left:1311px;top:152px;width:1px;height:3px;background:#000'></div><div class='a' style='left:1340px;top:150px;width:1px;height:5px;background:#000'></div><div class='t' style='left:1315px;top:135.5px;width:50px;text-align:center;font-size:12px;font-weight:bold'>3:30</div><div class='a' style='left:1368px;top:152px;width:1px;height:3px;background:#000'></div><div class='a' style='left:1397px;top:152px;width:1px;height:3px;background:#000'></div><div class='a' style='left:1425px;top:150px;width:1px;height:5px;background:#000'></div><div class='t' style='left:1400px;top:135.5px;width:50px;text-align:center;font-size:12px;font-weight:bold'>3:45</div><div class='a' style='left:1454px;top:152px;width:1px;height:3px;background:#000'></div><div class='a' style='left:1483px;top:152px;width:1px;height:3px;background:#000'></div><div class='a' style='left:1511px;top:150px;width:1px;height:5px;background:#000'></div><div class='t' style='left:1486px;top:135.5px;width:50px;text-align:center;font-size:12px;font-weight:bold'>4:00</div><div class='a' style='left:1540px;top:152px;width:1px;height:3px;background:#000'></div><div class='a' style='left:1569px;top:152px;width:1px;height:3px;background:#000'></div><div class='a' style='left:1597px;top:150px;width:1px;height:5px;background:#000'></div><div class='t' style='left:1572px;top:135.5px;width:50px;text-align:center;font-size:12px;font-weight:bold'>4:15</div><div class='a' style='left:1626px;top:152px;width:1px;height:3px;background:#000'></div><div class='a' style='left:1654px;top:152px;width:1px;height:3px;background:#000'></div><div class='a' style='left:1683px;top:150px;width:1px;height:5px;background:#000'></div><div class='t' style='left:1658px;top:135.5px;width:50px;text-align:center;font-size:12px;font-weight:bold'>4:30</div><div class='a' style='left:1712px;top:152px;width:1px;height:3px;background:#000'></div><div class='a' style='left:0px;top:155px;width:1733px;height:1px;background:#9a9a9a'></div><div class='a' style='left:0px;top:156px;width:1733px;height:1px;background:#000'></div><svg class='a' style='left:1344px;top:128px' width='10' height='28'><path d='M1.5 1V27' stroke='#000' stroke-width='1.1'/><polygon points='2,19 7.5,14.5 7.5,27' fill='#c8c8c8' stroke='#909090' stroke-width='0.7'/></svg><div class='a' style='left:4px;top:161px;width:1729px;height:146px;background:#000;'></div><div class='a' style='left:5px;top:162px;width:95px;height:143px;background:#f7f8fc;'></div><div class='a' style='left:101px;top:162px;width:35px;height:143px;background:#f7f8fc;'></div><div class='a' style='left:136px;top:162px;width:1px;height:143px;background:#a0a0a0'></div><div class='a' style='left:137px;top:162px;width:1366px;height:143px;background:#c4c4c4;'></div><div class='a' style='left:1503px;top:162px;width:1px;height:143px;background:#606060'></div><div class='a' style='left:1504px;top:162px;width:229px;height:143px;background:#d6d6d6;'></div><svg class='a' style='left:137px;top:162px' width='1366' height='142'><defs><pattern id='p1' width='16' height='16' patternUnits='userSpaceOnUse'><path d='M0 0h1v1h-1zM7 1h1v1h-1zM13 0h1v1h-1zM2 5h1v1h-1zM7 4h1v1h-1zM10 4h1v1h-1zM15 5h1v1h-1zM15 8h1v1h-1zM3 8h1v1h-1zM8 8h1v1h-1zM13 9h1v1h-1zM3 12h1v1h-1zM7 12h1v1h-1zM14 12h1v1h-1z' fill='rgba(40,40,90,0.07)'/></pattern></defs><rect width='1366' height='142' fill='url(#p1)'/></svg><svg class='a' style='left:1504px;top:162px' width='229' height='142'><defs><pattern id='p2' width='16' height='16' patternUnits='userSpaceOnUse'><path d='M0 0h1v1h-1zM7 1h1v1h-1zM13 0h1v1h-1zM2 5h1v1h-1zM7 4h1v1h-1zM10 4h1v1h-1zM15 5h1v1h-1zM15 8h1v1h-1zM3 8h1v1h-1zM8 8h1v1h-1zM13 9h1v1h-1zM3 12h1v1h-1zM7 12h1v1h-1zM14 12h1v1h-1z' fill='rgba(0,0,0,0.06)'/></pattern></defs><rect width='229' height='142' fill='url(#p2)'/></svg><div class='a' style='left:137px;top:304px;width:1596px;height:1px;background:#d4d4d4;'></div><div class='a' style='left:4px;top:305px;width:1729px;height:2px;background:#000;'></div><div class='a' style='left:5px;top:162px;width:18px;height:18px;background:#cdd9ef;border-top:1px solid #fff;border-left:1px solid #fff;border-right:1px solid #8c8c8c;border-bottom:1px solid #8c8c8c'></div><svg class='a' style='left:9px;top:166px' width='11' height='11'><path d='M2.5 2.5L8.5 8.5M8.5 2.5L2.5 8.5' stroke='#000' stroke-width='1.5'/></svg><div class='a' style='left:23px;top:162px;width:78px;height:18px;background:#cdd9ef;border-top:1px solid #fff;border-left:1px solid #fff;border-right:1px solid #8c8c8c;border-bottom:1px solid #8c8c8c'></div><div class='t' style='left:26px;top:166px;font-size:11px;'>Neal Sawye</div><svg class='a' style='left:86px;top:168px' width='12' height='8'><polygon points='0,0 12,0 6,7' fill='#000'/></svg><div class='a' style='left:5px;top:180px;width:48px;height:18px;background:#cdd9ef;border-top:1px solid #fff;border-left:1px solid #fff;border-right:1px solid #8c8c8c;border-bottom:1px solid #8c8c8c'></div><div class='t' style='left:5px;top:183.5px;width:48px;text-align:center;font-size:11px;'>Mute</div><div class='a' style='left:53px;top:180px;width:48px;height:18px;background:#cdd9ef;border-top:1px solid #fff;border-left:1px solid #fff;border-right:1px solid #8c8c8c;border-bottom:1px solid #8c8c8c'></div><div class='t' style='left:53px;top:183.5px;width:48px;text-align:center;font-size:11px;'>Solo</div><div class='a' style='left:16px;top:215px;width:76px;height:2px;background:#a0a0a0'></div><div class='a' style='left:17px;top:212px;width:1px;height:3px;background:#a8a8a8'></div><div class='a' style='left:24px;top:213px;width:1px;height:2px;background:#a8a8a8'></div><div class='a' style='left:32px;top:213px;width:1px;height:2px;background:#a8a8a8'></div><div class='a' style='left:39px;top:213px;width:1px;height:2px;background:#a8a8a8'></div><div class='a' style='left:46px;top:213px;width:1px;height:2px;background:#a8a8a8'></div><div class='a' style='left:54px;top:213px;width:1px;height:2px;background:#a8a8a8'></div><div class='a' style='left:61px;top:213px;width:1px;height:2px;background:#a8a8a8'></div><div class='a' style='left:68px;top:213px;width:1px;height:2px;background:#a8a8a8'></div><div class='a' style='left:75px;top:213px;width:1px;height:2px;background:#a8a8a8'></div><div class='a' style='left:83px;top:213px;width:1px;height:2px;background:#a8a8a8'></div><div class='a' style='left:90px;top:212px;width:1px;height:3px;background:#a8a8a8'></div><div class='t' style='left:16px;top:200px;font-size:10px;'>&#8211;</div><div class='t' style='left:83.5px;top:200px;font-size:10px;'>+</div><svg class='a' style='left:47px;top:210px' width='12' height='12'><circle cx='6' cy='6' r='3.7' stroke='#4d52e8' stroke-width='3' fill='#9a9aae'/></svg><div class='a' style='left:16px;top:245px;width:76px;height:2px;background:#a0a0a0'></div><div class='a' style='left:17px;top:242px;width:1px;height:3px;background:#a8a8a8'></div><div class='a' style='left:24px;top:243px;width:1px;height:2px;background:#a8a8a8'></div><div class='a' style='left:32px;top:243px;width:1px;height:2px;background:#a8a8a8'></div><div class='a' style='left:39px;top:243px;width:1px;height:2px;background:#a8a8a8'></div><div class='a' style='left:46px;top:243px;width:1px;height:2px;background:#a8a8a8'></div><div class='a' style='left:54px;top:243px;width:1px;height:2px;background:#a8a8a8'></div><div class='a' style='left:61px;top:243px;width:1px;height:2px;background:#a8a8a8'></div><div class='a' style='left:68px;top:243px;width:1px;height:2px;background:#a8a8a8'></div><div class='a' style='left:75px;top:243px;width:1px;height:2px;background:#a8a8a8'></div><div class='a' style='left:83px;top:243px;width:1px;height:2px;background:#a8a8a8'></div><div class='a' style='left:90px;top:242px;width:1px;height:3px;background:#a8a8a8'></div><div class='t' style='left:16px;top:230px;font-size:10px;'>L</div><div class='t' style='left:83.5px;top:230px;font-size:10px;'>R</div><svg class='a' style='left:47px;top:240px' width='12' height='12'><circle cx='6' cy='6' r='3.7' stroke='#4d52e8' stroke-width='3' fill='#9a9aae'/></svg><div class='t' style='left:8px;top:261px;font-size:10.6px;'>Mono, 44100Hz</div><div class='t' style='left:8px;top:273px;font-size:10.6px;'>32-bit float</div><div class='a' style='left:6px;top:287px;width:17px;height:18px;background:#cdd9ef;border-top:1px solid #fff;border-left:1px solid #fff;border-right:1px solid #8c8c8c;border-bottom:1px solid #8c8c8c'></div><svg class='a' style='left:9px;top:292px' width='12' height='8'><polygon points='0,7 12,7 6,0' fill='#000'/></svg><div class='a' style='left:23px;top:287px;width:59px;height:18px;background:#cdd9ef;border-top:1px solid #fff;border-left:1px solid #fff;border-right:1px solid #8c8c8c;border-bottom:1px solid #8c8c8c'></div><div class='t' style='left:23px;top:290.5px;width:59px;text-align:center;font-size:11px;padding-left:3px'>Select</div><div class='t' style='left:100px;top:165px;width:30px;text-align:right;font-size:11px;font-weight:bold;'>1.0</div><div class='t' style='left:100px;top:194px;width:30px;text-align:right;font-size:11px;'>0.5</div><div class='a' style='left:133px;top:198px;width:3px;height:1px;background:#000'></div><div class='t' style='left:100px;top:229px;width:30px;text-align:right;font-size:11px;font-weight:bold;'>0.0</div><div class='a' style='left:131px;top:233px;width:5px;height:1px;background:#000'></div><div class='t' style='left:100px;top:265px;width:30px;text-align:right;font-size:11px;'>-0.5</div><div class='a' style='left:133px;top:269px;width:3px;height:1px;background:#000'></div><div class='t' style='left:100px;top:292px;width:30px;text-align:right;font-size:11px;font-weight:bold;'>-1.0</div><svg class='a' style='left:0;top:0' width='1733' height='310' viewBox='0 0 1733 310'><path d='M137 233.5H1503' stroke='#3232c8' stroke-width='1'/><path d='M137.5 233V234M138.5 233V234M139.5 233V234M140.5 233V234M141.5 233V234M142.5 233V234M143.5 233V234M144.5 233V234M145.5 233V234M146.5 233V234M147.5 233V234M148.5 233V234M149.5 233V234M150.5 233V234M151.5 233V234M152.5 233V234M153.5 233V234M154.5 233V234M155.5 233V234M156.5 233V234M157.5 233V234M158.5 233V234M159.5 233V234M160.5 233V234M161.5 233V234M162.5 233V234M163.5 233V234M164.5 233V234M165.5 233V234M166.5 233V234M167.5 233V234M168.5 233V234M169.5 233V234M170.5 233V234M171.5 233V234M172.5 233V234M173.5 232V235M174.5 233V234M175.5 232V235M176.5 233V234M177.5 232V235M178.5 231V236M179.5 233V234M180.5 231V236M181.5 232V235M182.5 233V234M183.5 233V234M184.5 233V234M185.5 231V236M186.5 232V235M187.5 232V235M188.5 232V235M189.5 233V234M190.5 233V234M191.5 233V234M192.5 233V234M193.5 232V235M194.5 233V234M195.5 233V234M196.5 232V235M197.5 233V234M198.5 233V234M199.5 233V234M200.5 233V234M201.5 233V234M202.5 233V234M203.5 233V234M204.5 232V235M205.5 233V234M206.5 232V235M207.5 233V234M208.5 233V234M209.5 233V234M210.5 232V235M211.5 231V236M212.5 232V235M213.5 231V236M214.5 233V234M215.5 233V234M216.5 232V235M217.5 232V235M218.5 233V234M219.5 233V234M220.5 233V234M221.5 233V234M222.5 233V234M223.5 233V234M224.5 233V234M225.5 232V235M226.5 233V234M227.5 233V234M228.5 233V234M229.5 231V236M230.5 233V234M231.5 231V236M232.5 233V234M233.5 233V234M234.5 233V234M235.5 232V235M236.5 232V235M237.5 233V234M238.5 233V234M239.5 233V234M240.5 231V236M241.5 233V234M242.5 233V234M243.5 233V234M244.5 233V234M245.5 231V236M246.5 233V234M247.5 233V234M248.5 233V234M249.5 232V235M250.5 232V235M251.5 233V234M252.5 232V235M253.5 232V235M254.5 232V235M255.5 233V234M256.5 232V235M257.5 233V234M258.5 233V234M259.5 233V234M260.5 233V234M261.5 231V236M262.5 233V234M263.5 232V235M264.5 232V235M265.5 232V235M266.5 232V235M267.5 226V252M268.5 222V248M269.5 222V248M270.5 219V248M271.5 222V245M272.5 223V247M273.5 222V248M274.5 224V248M275.5 226V244M276.5 226V243M277.5 226V240M278.5 232V235M279.5 232V235M280.5 233V234M281.5 227V250M282.5 221V247M283.5 221V243M284.5 218V244M285.5 221V247M286.5 224V247M287.5 221V244M288.5 224V245M289.5 221V245M290.5 225V241M291.5 226V245M292.5 231V236M293.5 231V236M294.5 226V240M295.5 225V241M296.5 226V241M297.5 232V235M298.5 232V235M299.5 233V234M300.5 232V235M301.5 232V235M302.5 232V235M303.5 232V235M304.5 232V235M305.5 232V235M306.5 232V235M307.5 232V235M308.5 220V246M309.5 215V252M310.5 220V256M311.5 221V252M312.5 219V252M313.5 219V246M314.5 229V239M315.5 229V237M316.5 230V237M317.5 220V244M318.5 219V248M319.5 224V247M320.5 225V241M321.5 222V242M322.5 226V244M323.5 232V235M324.5 232V235M325.5 232V235M326.5 232V235M327.5 232V235M328.5 232V235M329.5 231V236M330.5 232V235M331.5 232V235M332.5 232V235M333.5 232V235M334.5 232V235M335.5 232V235M336.5 232V235M337.5 232V235M338.5 232V235M339.5 231V236M340.5 221V241M341.5 223V246M342.5 223V246M343.5 223V246M344.5 225V249M345.5 223V245M346.5 223V244M347.5 226V240M348.5 228V242M349.5 225V241M350.5 227V239M351.5 228V238M352.5 229V238M353.5 232V235M354.5 233V234M355.5 220V252M356.5 213V265M357.5 208V256M358.5 213V259M359.5 214V257M360.5 215V259M361.5 213V252M362.5 227V240M363.5 218V257M364.5 213V254M365.5 222V255M366.5 217V252M367.5 218V251M368.5 221V250M369.5 223V246M370.5 222V243M371.5 232V235M372.5 232V235M373.5 232V235M374.5 232V235M375.5 232V235M376.5 233V234M377.5 232V235M378.5 232V235M379.5 232V235M380.5 226V249M381.5 219V256M382.5 217V256M383.5 220V261M384.5 220V256M385.5 220V252M386.5 213V256M387.5 221V256M388.5 222V255M389.5 223V256M390.5 218V250M391.5 230V239M392.5 231V238M393.5 222V254M394.5 225V251M395.5 223V248M396.5 224V250M397.5 226V249M398.5 226V247M399.5 232V235M400.5 232V235M401.5 232V235M402.5 231V236M403.5 230V237M404.5 232V235M405.5 232V235M406.5 233V234M407.5 232V235M408.5 232V235M409.5 232V235M410.5 232V235M411.5 233V234M412.5 232V235M413.5 216V262M414.5 206V277M415.5 205V268M416.5 205V266M417.5 213V268M418.5 198V267M419.5 205V264M420.5 215V268M421.5 205V265M422.5 210V259M423.5 208V265M424.5 211V267M425.5 205V268M426.5 212V266M427.5 209V264M428.5 215V268M429.5 206V268M430.5 206V267M431.5 215V264M432.5 207V266M433.5 210V268M434.5 210V264M435.5 219V262M436.5 221V263M437.5 216V259M438.5 228V240M439.5 229V240M440.5 229V239M441.5 217V254M442.5 220V254M443.5 220V256M444.5 218V255M445.5 232V235M446.5 232V235M447.5 232V235M448.5 233V234M449.5 232V235M450.5 210V253M451.5 196V267M452.5 202V275M453.5 193V261M454.5 183V267M455.5 193V262M456.5 208V261M457.5 202V264M458.5 206V257M459.5 202V260M460.5 209V253M461.5 209V256M462.5 217V254M463.5 231V236M464.5 218V251M465.5 220V251M466.5 210V257M467.5 218V252M468.5 215V257M469.5 219V263M470.5 215V257M471.5 220V257M472.5 215V257M473.5 227V240M474.5 228V238M475.5 218V254M476.5 222V257M477.5 219V250M478.5 220V249M479.5 216V252M480.5 219V250M481.5 224V248M482.5 218V251M483.5 219V246M484.5 224V243M485.5 223V245M486.5 224V245M487.5 230V237M488.5 233V234M489.5 212V267M490.5 207V260M491.5 200V260M492.5 214V253M493.5 211V260M494.5 209V257M495.5 214V253M496.5 221V245M497.5 232V235M498.5 232V235M499.5 232V235M500.5 232V235M501.5 232V235M502.5 216V253M503.5 214V252M504.5 212V265M505.5 212V259M506.5 217V259M507.5 207V259M508.5 228V238M509.5 229V239M510.5 212V259M511.5 217V259M512.5 220V257M513.5 212V253M514.5 212V256M515.5 221V252M516.5 217V250M517.5 214V249M518.5 215V249M519.5 222V251M520.5 223V250M521.5 217V250M522.5 221V244M523.5 221V244M524.5 221V244M525.5 222V245M526.5 232V235M527.5 232V235M528.5 233V234M529.5 232V235M530.5 232V235M531.5 232V235M532.5 233V234M533.5 232V235M534.5 232V235M535.5 232V235M536.5 225V250M537.5 220V257M538.5 216V257M539.5 217V255M540.5 212V258M541.5 220V264M542.5 216V258M543.5 223V258M544.5 222V258M545.5 222V258M546.5 218V251M547.5 229V239M548.5 230V237M549.5 226V254M550.5 227V249M551.5 225V244M552.5 232V235M553.5 232V235M554.5 233V234M555.5 232V235M556.5 232V235M557.5 232V235M558.5 232V235M559.5 232V235M560.5 232V235M561.5 209V274M562.5 203V266M563.5 203V266M564.5 203V266M565.5 195V266M566.5 207V266M567.5 204V259M568.5 211V266M569.5 215V260M570.5 210V257M571.5 212V252M572.5 220V248M573.5 232V235M574.5 221V249M575.5 207V260M576.5 201V266M577.5 211V260M578.5 207V260M579.5 207V260M580.5 228V238M581.5 227V238M582.5 216V257M583.5 212V258M584.5 213V259M585.5 214V255M586.5 216V247M587.5 216V247M588.5 220V248M589.5 222V245M590.5 232V235M591.5 232V235M592.5 232V235M593.5 232V235M594.5 233V234M595.5 230V237M596.5 232V235M597.5 232V235M598.5 200V262M599.5 214V269M600.5 207V262M601.5 207V269M602.5 208V278M603.5 211V269M604.5 213V269M605.5 212V254M606.5 214V266M607.5 219V262M608.5 222V252M609.5 220V254M610.5 220V246M611.5 217V256M612.5 213V250M613.5 218V252M614.5 218V248M615.5 218V247M616.5 219V243M617.5 221V246M618.5 225V245M619.5 220V246M620.5 208V259M621.5 218V254M622.5 215V254M623.5 218V250M624.5 215V254M625.5 222V244M626.5 219V246M627.5 222V244M628.5 222V246M629.5 232V235M630.5 232V235M631.5 232V235M632.5 231V236M633.5 232V235M634.5 221V248M635.5 213V259M636.5 217V251M637.5 213V252M638.5 208V265M639.5 215V259M640.5 216V254M641.5 213V254M642.5 217V246M643.5 219V249M644.5 221V246M645.5 220V249M646.5 233V234M647.5 232V235M648.5 222V254M649.5 216V261M650.5 210V264M651.5 210V264M652.5 212V264M653.5 211V260M654.5 210V264M655.5 204V271M656.5 210V258M657.5 213V264M658.5 210V264M659.5 210V264M660.5 210V264M661.5 210V252M662.5 217V250M663.5 227V241M664.5 228V239M665.5 217V251M666.5 215V260M667.5 219V248M668.5 221V251M669.5 216V254M670.5 220V246M671.5 224V246M672.5 202V258M673.5 208V273M674.5 214V265M675.5 216V265M676.5 211V265M677.5 210V257M678.5 213V260M679.5 218V250M680.5 217V252M681.5 232V235M682.5 232V235M683.5 200V268M684.5 207V256M685.5 207V261M686.5 207V261M687.5 207V254M688.5 215V260M689.5 211V255M690.5 214V260M691.5 218V256M692.5 224V244M693.5 232V235M694.5 232V235M695.5 207V266M696.5 212V260M697.5 217V260M698.5 219V260M699.5 219V257M700.5 225V248M701.5 228V244M702.5 221V246M703.5 218V251M704.5 225V248M705.5 224V245M706.5 225V248M707.5 222V241M708.5 225V242M709.5 228V244M710.5 227V241M711.5 233V234M712.5 232V235M713.5 232V235M714.5 232V235M715.5 232V235M716.5 232V235M717.5 233V234M718.5 232V235M719.5 232V235M720.5 232V235M721.5 232V235M722.5 232V235M723.5 232V235M724.5 232V235M725.5 232V235M726.5 232V235M727.5 233V234M728.5 232V235M729.5 233V234M730.5 232V235M731.5 232V235M732.5 232V235M733.5 232V235M734.5 232V235M735.5 232V235M736.5 232V235M737.5 232V235M738.5 233V234M739.5 233V234M740.5 232V235M741.5 232V235M742.5 227V240M743.5 219V247M744.5 222V252M745.5 222V248M746.5 222V248M747.5 225V248M748.5 222V248M749.5 224V243M750.5 223V245M751.5 225V242M752.5 224V242M753.5 227V241M754.5 226V239M755.5 232V235M756.5 232V235M757.5 218V247M758.5 206V264M759.5 213V256M760.5 211V257M761.5 211V258M762.5 216V252M763.5 211V258M764.5 213V253M765.5 229V239M766.5 227V237M767.5 217V247M768.5 215V246M769.5 219V247M770.5 216V251M771.5 222V247M772.5 232V235M773.5 232V235M774.5 232V235M775.5 232V235M776.5 232V235M777.5 231V236M778.5 233V234M779.5 232V235M780.5 230V237M781.5 232V235M782.5 232V235M783.5 232V235M784.5 215V263M785.5 219V257M786.5 219V257M787.5 219V254M788.5 219V257M789.5 219V257M790.5 228V242M791.5 229V238M792.5 219V251M793.5 219V257M794.5 221V250M795.5 221V254M796.5 219V255M797.5 225V254M798.5 223V245M799.5 226V250M800.5 233V234M801.5 232V235M802.5 231V236M803.5 232V235M804.5 231V236M805.5 232V235M806.5 232V235M807.5 232V235M808.5 232V235M809.5 233V234M810.5 232V235M811.5 232V235M812.5 230V237M813.5 232V235M814.5 226V240M815.5 221V248M816.5 224V245M817.5 223V243M818.5 223V245M819.5 223V245M820.5 225V245M821.5 225V244M822.5 225V245M823.5 226V245M824.5 225V239M825.5 228V240M826.5 227V240M827.5 232V235M828.5 232V235M829.5 232V235M830.5 225V252M831.5 215V260M832.5 215V256M833.5 215V258M834.5 219V255M835.5 216V260M836.5 215V266M837.5 215V260M838.5 210V260M839.5 215V259M840.5 217V260M841.5 218V260M842.5 220V257M843.5 229V242M844.5 229V240M845.5 229V239M846.5 217V258M847.5 224V257M848.5 223V252M849.5 219V252M850.5 223V255M851.5 220V255M852.5 223V248M853.5 221V253M854.5 227V251M855.5 232V235M856.5 232V235M857.5 204V246M858.5 212V268M859.5 213V261M860.5 210V257M861.5 217V253M862.5 216V255M863.5 211V252M864.5 213V255M865.5 210V261M866.5 215V260M867.5 217V251M868.5 230V237M869.5 213V247M870.5 215V248M871.5 220V245M872.5 220V250M873.5 233V234M874.5 232V235M875.5 232V235M876.5 231V236M877.5 232V235M878.5 232V235M879.5 232V235M880.5 233V234M881.5 232V235M882.5 232V235M883.5 232V235M884.5 232V235M885.5 232V235M886.5 232V235M887.5 232V235M888.5 232V235M889.5 210V255M890.5 210V272M891.5 206V267M892.5 208V272M893.5 203V272M894.5 203V282M895.5 207V269M896.5 196V261M897.5 204V261M898.5 214V271M899.5 213V272M900.5 203V267M901.5 228V240M902.5 227V242M903.5 213V268M904.5 212V267M905.5 218V253M906.5 215V260M907.5 218V261M908.5 219V254M909.5 218V258M910.5 217V252M911.5 233V234M912.5 233V234M913.5 218V249M914.5 213V266M915.5 208V254M916.5 217V260M917.5 219V260M918.5 218V251M919.5 221V250M920.5 219V244M921.5 232V235M922.5 232V235M923.5 232V235M924.5 232V235M925.5 232V235M926.5 190V271M927.5 201V276M928.5 199V286M929.5 199V264M930.5 199V276M931.5 199V276M932.5 199V276M933.5 203V260M934.5 201V261M935.5 214V262M936.5 211V260M937.5 214V257M938.5 219V259M939.5 232V235M940.5 222V253M941.5 216V272M942.5 211V262M943.5 211V264M944.5 212V264M945.5 211V261M946.5 206V264M947.5 218V264M948.5 211V263M949.5 214V260M950.5 211V263M951.5 219V258M952.5 229V242M953.5 215V252M954.5 214V250M955.5 217V255M956.5 217V254M957.5 223V254M958.5 218V256M959.5 222V249M960.5 220V254M961.5 224V253M962.5 220V248M963.5 232V235M964.5 232V235M965.5 214V268M966.5 192V261M967.5 200V259M968.5 200V261M969.5 201V261M970.5 206V253M971.5 208V257M972.5 222V252M973.5 232V235M974.5 232V235M975.5 233V234M976.5 232V235M977.5 220V253M978.5 211V265M979.5 203V271M980.5 209V272M981.5 209V281M982.5 209V263M983.5 209V262M984.5 211V259M985.5 209V272M986.5 209V265M987.5 209V264M988.5 226V241M989.5 228V243M990.5 227V239M991.5 209V267M992.5 213V264M993.5 209V259M994.5 214V257M995.5 213V261M996.5 212V263M997.5 219V254M998.5 213V258M999.5 217V256M1000.5 220V257M1001.5 219V250M1002.5 232V235M1003.5 233V234M1004.5 232V235M1005.5 232V235M1006.5 233V234M1007.5 232V235M1008.5 232V235M1009.5 232V235M1010.5 231V236M1011.5 230V237M1012.5 215V276M1013.5 216V260M1014.5 212V261M1015.5 209V268M1016.5 203V264M1017.5 213V268M1018.5 226V245M1019.5 228V245M1020.5 211V265M1021.5 215V260M1022.5 209V268M1023.5 211V256M1024.5 219V254M1025.5 218V262M1026.5 222V257M1027.5 217V248M1028.5 221V255M1029.5 233V234M1030.5 232V235M1031.5 233V234M1032.5 233V234M1033.5 232V235M1034.5 232V235M1035.5 232V235M1036.5 232V235M1037.5 205V256M1038.5 201V267M1039.5 194V272M1040.5 194V281M1041.5 194V261M1042.5 224V241M1043.5 184V242M1044.5 196V272M1045.5 210V272M1046.5 206V268M1047.5 194V272M1048.5 200V272M1049.5 194V259M1050.5 202V265M1051.5 212V272M1052.5 226V240M1053.5 227V243M1054.5 210V264M1055.5 205V263M1056.5 202V265M1057.5 205V257M1058.5 206V257M1059.5 207V261M1060.5 205V250M1061.5 208V260M1062.5 215V256M1063.5 210V256M1064.5 211V251M1065.5 233V234M1066.5 232V235M1067.5 232V235M1068.5 232V235M1069.5 232V235M1070.5 232V235M1071.5 232V235M1072.5 231V236M1073.5 232V235M1074.5 192V273M1075.5 185V293M1076.5 186V280M1077.5 173V281M1078.5 185V273M1079.5 185V277M1080.5 193V278M1081.5 192V268M1082.5 185V265M1083.5 200V266M1084.5 195V260M1085.5 216V256M1086.5 198V263M1087.5 198V279M1088.5 198V270M1089.5 189V270M1090.5 227V241M1091.5 225V244M1092.5 206V270M1093.5 202V270M1094.5 198V262M1095.5 198V263M1096.5 198V255M1097.5 198V270M1098.5 211V265M1099.5 209V254M1100.5 208V261M1101.5 202V263M1102.5 203V257M1103.5 209V250M1104.5 210V253M1105.5 216V255M1106.5 232V235M1107.5 232V235M1108.5 232V235M1109.5 232V235M1110.5 203V253M1111.5 203V272M1112.5 196V270M1113.5 193V272M1114.5 193V272M1115.5 193V269M1116.5 207V262M1117.5 183V282M1118.5 203V271M1119.5 202V266M1120.5 225V243M1121.5 225V243M1122.5 193V272M1123.5 207V269M1124.5 198V265M1125.5 202V264M1126.5 196V265M1127.5 211V267M1128.5 223V240M1129.5 227V240M1130.5 208V261M1131.5 201V263M1132.5 200V260M1133.5 212V271M1134.5 204V262M1135.5 214V264M1136.5 201V255M1137.5 215V260M1138.5 206V251M1139.5 214V266M1140.5 207V262M1141.5 207V251M1142.5 208V253M1143.5 216V261M1144.5 216V250M1145.5 211V253M1146.5 212V249M1147.5 211V257M1148.5 199V266M1149.5 205V258M1150.5 201V271M1151.5 184V280M1152.5 197V269M1153.5 194V266M1154.5 203V262M1155.5 194V271M1156.5 198V259M1157.5 194V264M1158.5 208V262M1159.5 208V267M1160.5 205V271M1161.5 197V259M1162.5 203V267M1163.5 194V271M1164.5 194V264M1165.5 207V270M1166.5 196V257M1167.5 205V257M1168.5 212V267M1169.5 208V264M1170.5 202V257M1171.5 228V242M1172.5 225V240M1173.5 206V264M1174.5 201V253M1175.5 206V259M1176.5 203V251M1177.5 227V239M1178.5 227V241M1179.5 205V248M1180.5 215V252M1181.5 213V255M1182.5 214V251M1183.5 217V253M1184.5 214V252M1185.5 232V235M1186.5 232V235M1187.5 233V234M1188.5 232V235M1189.5 232V235M1190.5 232V235M1191.5 232V235M1192.5 232V235M1193.5 232V235M1194.5 231V236M1195.5 232V235M1196.5 232V235M1197.5 233V234M1198.5 233V234M1199.5 232V235M1200.5 230V237M1201.5 232V235M1202.5 233V234M1203.5 232V235M1204.5 232V235M1205.5 232V235M1206.5 232V235M1207.5 232V235M1208.5 232V235M1209.5 231V236M1210.5 230V237M1211.5 233V234M1212.5 232V235M1213.5 232V235M1214.5 232V235M1215.5 231V236M1216.5 232V235M1217.5 232V235M1218.5 232V235M1219.5 232V235M1220.5 232V235M1221.5 232V235M1222.5 232V235M1223.5 211V255M1224.5 206V264M1225.5 206V264M1226.5 206V264M1227.5 206V272M1228.5 199V244M1229.5 228V242M1230.5 206V264M1231.5 206V264M1232.5 208V260M1233.5 211V264M1234.5 211V264M1235.5 215V259M1236.5 210V261M1237.5 215V250M1238.5 217V247M1239.5 230V237M1240.5 233V234M1241.5 209V251M1242.5 211V264M1243.5 201V264M1244.5 201V259M1245.5 193V264M1246.5 224V241M1247.5 208V271M1248.5 207V264M1249.5 201V257M1250.5 203V259M1251.5 211V255M1252.5 202V256M1253.5 209V257M1254.5 218V258M1255.5 210V258M1256.5 216V249M1257.5 217V253M1258.5 216V248M1259.5 213V250M1260.5 208V264M1261.5 208V260M1262.5 208V264M1263.5 202V264M1264.5 208V272M1265.5 208V264M1266.5 214V264M1267.5 211V253M1268.5 208V262M1269.5 208V255M1270.5 226V239M1271.5 227V239M1272.5 212V257M1273.5 216V253M1274.5 221V253M1275.5 216V246M1276.5 232V235M1277.5 212V255M1278.5 202V275M1279.5 194V267M1280.5 202V261M1281.5 211V261M1282.5 202V267M1283.5 202V265M1284.5 211V267M1285.5 202V262M1286.5 215V258M1287.5 206V255M1288.5 212V265M1289.5 203V258M1290.5 207V264M1291.5 215V256M1292.5 230V239M1293.5 228V240M1294.5 228V238M1295.5 220V247M1296.5 221V246M1297.5 213V253M1298.5 217V257M1299.5 217V253M1300.5 217V257M1301.5 218V263M1302.5 217V256M1303.5 217V250M1304.5 224V255M1305.5 220V257M1306.5 221V254M1307.5 225V249M1308.5 221V249M1309.5 224V246M1310.5 224V247M1311.5 232V235M1312.5 232V235M1313.5 232V235M1314.5 232V235M1315.5 217V254M1316.5 215V260M1317.5 210V265M1318.5 210V265M1319.5 215V265M1320.5 204V265M1321.5 218V259M1322.5 210V273M1323.5 210V265M1324.5 213V255M1325.5 211V257M1326.5 210V254M1327.5 213V258M1328.5 229V241M1329.5 228V239M1330.5 215V251M1331.5 216V254M1332.5 215V250M1333.5 219V250M1334.5 221V249M1335.5 224V248M1336.5 232V235M1337.5 233V234M1338.5 232V235M1339.5 232V235M1340.5 232V235M1341.5 232V235M1342.5 232V235M1343.5 232V235M1344.5 232V235M1345.5 230V237M1346.5 231V236M1347.5 232V235M1348.5 232V235M1349.5 232V235M1350.5 232V235M1351.5 216V256M1352.5 207V277M1353.5 207V265M1354.5 213V268M1355.5 214V268M1356.5 201V268M1357.5 207V268M1358.5 207V268M1359.5 213V265M1360.5 207V265M1361.5 211V258M1362.5 216V268M1363.5 207V266M1364.5 214V261M1365.5 229V240M1366.5 211V251M1367.5 214V258M1368.5 221V253M1369.5 214V261M1370.5 220V251M1371.5 219V253M1372.5 220V251M1373.5 232V235M1374.5 232V235M1375.5 232V235M1376.5 233V234M1377.5 232V235M1378.5 230V237M1379.5 232V235M1380.5 232V235M1381.5 232V235M1382.5 232V235M1383.5 232V235M1384.5 232V235M1385.5 232V235M1386.5 232V235M1387.5 232V235M1388.5 209V259M1389.5 205V255M1390.5 198V267M1391.5 205V261M1392.5 205V268M1393.5 205V268M1394.5 210V268M1395.5 205V276M1396.5 211V268M1397.5 205V268M1398.5 205V256M1399.5 205V268M1400.5 227V243M1401.5 226V243M1402.5 213V263M1403.5 212V257M1404.5 209V261M1405.5 215V258M1406.5 210V257M1407.5 211V255M1408.5 212V247M1409.5 218V252M1410.5 232V235M1411.5 232V235M1412.5 232V235M1413.5 232V235M1414.5 232V235M1415.5 232V235M1416.5 232V235M1417.5 232V235M1418.5 232V235M1419.5 232V235M1420.5 232V235M1421.5 232V235M1422.5 230V237M1423.5 233V234M1424.5 210V257M1425.5 215V268M1426.5 203V268M1427.5 203V268M1428.5 196V261M1429.5 203V261M1430.5 208V268M1431.5 213V276M1432.5 210V268M1433.5 212V265M1434.5 207V268M1435.5 225V243M1436.5 228V240M1437.5 207V260M1438.5 216V263M1439.5 213V263M1440.5 212V253M1441.5 213V255M1442.5 219V257M1443.5 222V258M1444.5 221V250M1445.5 224V249M1446.5 233V234M1447.5 232V235M1448.5 232V235M1449.5 231V236M1450.5 232V235M1451.5 232V235M1452.5 233V234M1453.5 232V235M1454.5 232V235M1455.5 232V235M1456.5 232V235M1457.5 232V235M1458.5 232V235M1459.5 232V235M1460.5 232V235M1461.5 211V252M1462.5 213V271M1463.5 199V271M1464.5 190V271M1465.5 199V280M1466.5 208V267M1467.5 207V266M1468.5 208V264M1469.5 224V241M1470.5 224V243M1471.5 202V266M1472.5 202V257M1473.5 210V262M1474.5 216V264M1475.5 204V256M1476.5 209V258M1477.5 206V261M1478.5 213V248M1479.5 208V256M1480.5 213V254M1481.5 221V252M1482.5 233V234M1483.5 233V234M1484.5 232V235M1485.5 232V235M1486.5 232V235M1487.5 232V235M1488.5 232V235M1489.5 232V235M1490.5 233V234M1491.5 231V236M1492.5 232V235M1493.5 232V235M1494.5 232V235M1495.5 232V235M1496.5 232V235M1497.5 232V235M1498.5 232V235M1499.5 232V235M1500.5 232V235M1501.5 232V235M1502.5 232V235' stroke='#3232c8' stroke-width='1' shape-rendering='crispEdges'/><path d='M267.5 231V237M268.5 229V239M269.5 229V239M270.5 229V239M271.5 229V239M272.5 229V239M273.5 230V239M274.5 230V238M275.5 230V237M276.5 231V236M277.5 232V236M281.5 231V236M282.5 229V238M283.5 229V240M284.5 229V239M285.5 228V239M286.5 228V239M287.5 229V238M288.5 229V239M289.5 229V238M290.5 229V238M291.5 230V237M292.5 232V235M293.5 232V235M294.5 231V236M295.5 231V236M296.5 232V235M308.5 230V237M309.5 229V240M310.5 227V242M311.5 227V241M312.5 227V241M313.5 227V240M314.5 232V236M315.5 232V236M316.5 232V236M317.5 229V239M318.5 230V239M319.5 230V238M320.5 230V238M321.5 231V236M322.5 231V236M340.5 231V236M341.5 230V238M342.5 229V239M343.5 229V238M344.5 230V239M345.5 230V238M346.5 230V238M347.5 230V237M348.5 231V237M349.5 231V237M350.5 231V236M351.5 232V236M352.5 232V235M355.5 229V238M356.5 227V241M357.5 226V243M358.5 226V244M359.5 225V243M360.5 225V243M361.5 227V242M362.5 231V237M363.5 227V241M364.5 227V241M365.5 227V241M366.5 228V240M367.5 229V239M368.5 230V239M369.5 230V238M370.5 231V237M380.5 231V238M381.5 228V240M382.5 228V242M383.5 226V242M384.5 226V242M385.5 226V241M386.5 228V242M387.5 228V241M388.5 227V242M389.5 227V242M390.5 229V240M391.5 232V236M392.5 232V236M393.5 229V239M394.5 230V238M395.5 230V238M396.5 230V237M397.5 231V237M398.5 231V236M413.5 228V240M414.5 226V242M415.5 225V245M416.5 223V246M417.5 221V247M418.5 221V248M419.5 221V248M420.5 222V247M421.5 223V249M422.5 222V247M423.5 222V248M424.5 223V246M425.5 222V246M426.5 223V247M427.5 223V247M428.5 225V245M429.5 223V246M430.5 225V244M431.5 225V243M432.5 225V245M433.5 225V243M434.5 226V243M435.5 225V243M436.5 227V242M437.5 226V242M438.5 231V236M439.5 231V236M440.5 232V236M441.5 229V239M442.5 230V238M443.5 230V238M444.5 230V238M450.5 227V239M451.5 218V244M452.5 217V247M453.5 218V248M454.5 218V247M455.5 220V246M456.5 219V245M457.5 221V245M458.5 223V242M459.5 224V241M460.5 225V239M461.5 227V239M462.5 229V238M464.5 230V238M465.5 228V240M466.5 226V243M467.5 226V242M468.5 225V244M469.5 227V242M470.5 226V242M471.5 227V244M472.5 226V242M473.5 231V236M474.5 231V236M475.5 226V241M476.5 228V242M477.5 227V241M478.5 229V241M479.5 228V239M480.5 229V240M481.5 229V239M482.5 229V238M483.5 230V238M484.5 230V238M485.5 231V237M486.5 231V236M489.5 229V239M490.5 221V244M491.5 224V244M492.5 224V243M493.5 225V241M494.5 227V241M495.5 228V239M496.5 231V237M502.5 230V238M503.5 228V240M504.5 226V243M505.5 225V243M506.5 225V243M507.5 226V243M508.5 231V237M509.5 231V237M510.5 226V243M511.5 225V242M512.5 226V244M513.5 225V243M514.5 226V241M515.5 227V241M516.5 228V242M517.5 227V240M518.5 227V240M519.5 229V240M520.5 228V239M521.5 229V238M522.5 229V238M523.5 230V237M524.5 231V237M525.5 231V237M536.5 231V238M537.5 229V241M538.5 226V244M539.5 226V244M540.5 226V243M541.5 226V243M542.5 227V243M543.5 228V241M544.5 228V242M545.5 228V240M546.5 229V241M547.5 232V236M548.5 232V236M549.5 230V238M550.5 231V238M551.5 231V237M561.5 227V240M562.5 222V245M563.5 221V246M564.5 221V245M565.5 222V246M566.5 224V244M567.5 222V243M568.5 224V243M569.5 226V241M570.5 227V241M571.5 229V239M572.5 230V237M574.5 229V238M575.5 225V243M576.5 222V243M577.5 222V244M578.5 223V243M579.5 223V244M580.5 231V237M581.5 231V237M582.5 226V242M583.5 226V242M584.5 226V240M585.5 226V240M586.5 228V240M587.5 229V239M588.5 230V238M589.5 230V237M598.5 229V240M599.5 223V248M600.5 223V247M601.5 222V246M602.5 224V247M603.5 225V245M604.5 225V245M605.5 225V243M606.5 227V243M607.5 228V242M608.5 229V240M609.5 230V237M610.5 230V237M611.5 227V241M612.5 226V241M613.5 227V241M614.5 228V239M615.5 228V239M616.5 230V238M617.5 230V237M618.5 231V236M619.5 230V238M620.5 226V241M621.5 226V241M622.5 225V242M623.5 226V240M624.5 227V241M625.5 228V240M626.5 228V239M627.5 230V237M628.5 231V236M634.5 230V238M635.5 225V242M636.5 224V244M637.5 225V243M638.5 226V244M639.5 227V242M640.5 226V241M641.5 228V240M642.5 228V241M643.5 229V239M644.5 230V237M645.5 231V237M648.5 229V239M649.5 227V242M650.5 224V243M651.5 225V246M652.5 224V245M653.5 224V244M654.5 223V246M655.5 223V247M656.5 225V246M657.5 225V245M658.5 224V243M659.5 226V243M660.5 225V243M661.5 227V244M662.5 226V242M663.5 231V237M664.5 231V236M665.5 228V241M666.5 228V240M667.5 228V239M668.5 229V240M669.5 230V238M670.5 230V237M671.5 231V237M672.5 229V240M673.5 224V247M674.5 223V245M675.5 223V246M676.5 225V245M677.5 227V242M678.5 227V241M679.5 228V240M680.5 230V237M683.5 228V239M684.5 222V244M685.5 222V245M686.5 224V243M687.5 224V244M688.5 226V243M689.5 226V242M690.5 227V240M691.5 229V238M692.5 230V237M695.5 229V239M696.5 225V244M697.5 225V244M698.5 227V241M699.5 228V240M700.5 231V236M701.5 231V236M702.5 228V239M703.5 228V239M704.5 228V238M705.5 229V238M706.5 229V238M707.5 230V237M708.5 230V237M709.5 231V236M710.5 232V235M742.5 231V236M743.5 229V238M744.5 229V239M745.5 229V239M746.5 229V239M747.5 230V238M748.5 229V239M749.5 230V238M750.5 230V238M751.5 230V238M752.5 231V237M753.5 231V236M754.5 232V236M757.5 230V238M758.5 226V241M759.5 224V245M760.5 224V243M761.5 224V244M762.5 226V243M763.5 225V243M764.5 225V241M765.5 231V236M766.5 231V236M767.5 228V240M768.5 229V239M769.5 229V238M770.5 230V237M771.5 231V236M784.5 230V238M785.5 229V241M786.5 227V244M787.5 227V244M788.5 227V242M789.5 227V243M790.5 231V236M791.5 232V236M792.5 228V241M793.5 229V241M794.5 229V240M795.5 229V239M796.5 230V239M797.5 231V238M798.5 231V238M799.5 231V236M814.5 231V236M815.5 230V238M816.5 229V239M817.5 229V238M818.5 230V238M819.5 229V238M820.5 230V238M821.5 230V238M822.5 231V237M823.5 231V237M824.5 231V236M825.5 231V236M826.5 232V235M830.5 230V238M831.5 228V240M832.5 226V242M833.5 226V244M834.5 225V245M835.5 225V243M836.5 226V245M837.5 226V244M838.5 226V243M839.5 227V243M840.5 227V244M841.5 227V243M842.5 227V243M843.5 231V236M844.5 232V236M845.5 232V236M846.5 229V240M847.5 228V241M848.5 229V240M849.5 229V239M850.5 230V239M851.5 230V239M852.5 231V238M853.5 231V237M854.5 231V236M857.5 229V238M858.5 226V241M859.5 224V244M860.5 224V244M861.5 225V245M862.5 224V244M863.5 224V244M864.5 225V243M865.5 226V241M866.5 226V241M867.5 226V241M868.5 231V236M869.5 228V239M870.5 229V238M871.5 230V238M872.5 231V237M889.5 228V240M890.5 225V244M891.5 223V246M892.5 220V251M893.5 222V249M894.5 221V248M895.5 223V250M896.5 221V248M897.5 223V247M898.5 224V249M899.5 224V246M900.5 223V245M901.5 231V237M902.5 231V237M903.5 224V243M904.5 226V244M905.5 226V242M906.5 228V241M907.5 227V240M908.5 229V240M909.5 229V239M910.5 230V238M913.5 230V238M914.5 224V245M915.5 225V243M916.5 227V242M917.5 227V242M918.5 228V240M919.5 230V239M920.5 231V237M926.5 227V240M927.5 222V249M928.5 218V253M929.5 218V250M930.5 219V251M931.5 220V250M932.5 221V247M933.5 223V247M934.5 223V246M935.5 225V242M936.5 227V243M937.5 227V239M938.5 230V238M940.5 229V239M941.5 228V242M942.5 225V244M943.5 224V246M944.5 224V245M945.5 224V247M946.5 225V247M947.5 226V247M948.5 225V246M949.5 225V244M950.5 225V244M951.5 227V244M952.5 231V237M953.5 226V243M954.5 226V243M955.5 228V242M956.5 227V241M957.5 228V240M958.5 229V240M959.5 229V239M960.5 230V238M961.5 230V238M962.5 231V237M965.5 227V239M966.5 220V245M967.5 221V244M968.5 222V244M969.5 223V243M970.5 224V240M971.5 227V239M972.5 230V237M977.5 229V241M978.5 227V242M979.5 225V247M980.5 223V249M981.5 222V249M982.5 223V251M983.5 223V249M984.5 224V248M985.5 224V249M986.5 225V247M987.5 225V247M988.5 230V238M989.5 231V238M990.5 231V237M991.5 226V244M992.5 227V243M993.5 226V243M994.5 227V242M995.5 228V243M996.5 228V243M997.5 228V241M998.5 228V240M999.5 229V239M1000.5 230V239M1001.5 230V238M1012.5 229V240M1013.5 226V243M1014.5 223V249M1015.5 223V249M1016.5 224V246M1017.5 225V246M1018.5 230V237M1019.5 230V238M1020.5 225V244M1021.5 225V244M1022.5 226V244M1023.5 226V242M1024.5 227V243M1025.5 228V241M1026.5 229V240M1027.5 230V239M1028.5 230V238M1037.5 227V240M1038.5 224V242M1039.5 222V247M1040.5 216V248M1041.5 217V251M1042.5 229V238M1043.5 228V239M1044.5 216V249M1045.5 217V249M1046.5 217V247M1047.5 220V249M1048.5 220V248M1049.5 221V246M1050.5 221V245M1051.5 219V245M1052.5 229V237M1053.5 230V237M1054.5 221V244M1055.5 223V244M1056.5 224V242M1057.5 224V243M1058.5 225V242M1059.5 226V241M1060.5 226V240M1061.5 227V241M1062.5 227V240M1063.5 228V239M1064.5 229V237M1074.5 225V243M1075.5 215V251M1076.5 213V252M1077.5 213V251M1078.5 214V249M1079.5 219V250M1080.5 220V248M1081.5 222V247M1082.5 223V244M1083.5 225V242M1084.5 228V239M1085.5 228V239M1086.5 224V244M1087.5 221V247M1088.5 219V247M1089.5 219V248M1090.5 229V238M1091.5 229V238M1092.5 219V246M1093.5 219V246M1094.5 220V247M1095.5 221V245M1096.5 222V244M1097.5 222V246M1098.5 225V245M1099.5 225V242M1100.5 224V242M1101.5 226V242M1102.5 226V240M1103.5 228V240M1104.5 229V239M1105.5 229V238M1110.5 227V240M1111.5 224V242M1112.5 223V246M1113.5 219V246M1114.5 219V250M1115.5 218V248M1116.5 218V251M1117.5 219V249M1118.5 217V250M1119.5 216V249M1120.5 228V238M1121.5 228V239M1122.5 217V248M1123.5 219V247M1124.5 218V246M1125.5 220V248M1126.5 218V248M1127.5 219V246M1128.5 230V238M1129.5 229V237M1130.5 221V245M1131.5 221V245M1132.5 222V245M1133.5 221V246M1134.5 222V244M1135.5 223V245M1136.5 225V243M1137.5 224V243M1138.5 224V243M1139.5 224V242M1140.5 226V241M1141.5 226V241M1142.5 226V240M1143.5 227V239M1144.5 228V239M1145.5 228V238M1146.5 229V238M1147.5 227V240M1148.5 224V241M1149.5 222V244M1150.5 220V245M1151.5 218V248M1152.5 215V248M1153.5 215V251M1154.5 216V250M1155.5 216V250M1156.5 218V250M1157.5 217V247M1158.5 217V247M1159.5 220V247M1160.5 219V249M1161.5 219V247M1162.5 218V246M1163.5 219V245M1164.5 220V247M1165.5 221V246M1166.5 219V246M1167.5 221V245M1168.5 220V245M1169.5 221V246M1170.5 222V246M1171.5 230V237M1172.5 230V237M1173.5 224V242M1174.5 223V242M1175.5 225V243M1176.5 225V242M1177.5 231V236M1178.5 231V236M1179.5 227V241M1180.5 226V239M1181.5 227V240M1182.5 228V239M1183.5 229V238M1184.5 229V238M1223.5 228V239M1224.5 224V242M1225.5 221V246M1226.5 224V247M1227.5 223V247M1228.5 230V237M1229.5 230V237M1230.5 223V244M1231.5 225V243M1232.5 226V242M1233.5 226V241M1234.5 227V241M1235.5 228V241M1236.5 228V240M1237.5 229V238M1238.5 230V237M1241.5 228V239M1242.5 224V242M1243.5 219V245M1244.5 219V245M1245.5 219V244M1246.5 230V237M1247.5 221V245M1248.5 222V244M1249.5 222V243M1250.5 222V243M1251.5 223V243M1252.5 224V242M1253.5 226V242M1254.5 226V241M1255.5 226V240M1256.5 227V239M1257.5 228V238M1258.5 230V237M1259.5 229V238M1260.5 226V244M1261.5 224V245M1262.5 224V247M1263.5 224V245M1264.5 225V247M1265.5 225V244M1266.5 224V244M1267.5 224V245M1268.5 226V244M1269.5 226V243M1270.5 231V236M1271.5 231V236M1272.5 228V240M1273.5 229V239M1274.5 230V238M1275.5 230V237M1277.5 228V240M1278.5 224V242M1279.5 221V247M1280.5 220V248M1281.5 220V248M1282.5 220V246M1283.5 221V246M1284.5 222V245M1285.5 221V245M1286.5 223V245M1287.5 222V244M1288.5 223V244M1289.5 223V244M1290.5 224V242M1291.5 224V241M1292.5 231V236M1293.5 231V236M1294.5 231V236M1295.5 228V240M1296.5 229V238M1297.5 230V238M1298.5 228V242M1299.5 227V242M1300.5 226V243M1301.5 227V242M1302.5 227V242M1303.5 228V241M1304.5 228V241M1305.5 229V241M1306.5 229V240M1307.5 229V239M1308.5 230V238M1309.5 231V238M1310.5 231V236M1315.5 230V239M1316.5 226V241M1317.5 224V245M1318.5 224V248M1319.5 223V246M1320.5 224V246M1321.5 223V247M1322.5 225V246M1323.5 225V244M1324.5 224V245M1325.5 225V245M1326.5 226V243M1327.5 226V244M1328.5 231V237M1329.5 231V236M1330.5 228V242M1331.5 228V240M1332.5 229V240M1333.5 229V239M1334.5 230V239M1335.5 231V237M1351.5 229V239M1352.5 227V244M1353.5 223V247M1354.5 223V247M1355.5 222V247M1356.5 223V248M1357.5 223V246M1358.5 223V248M1359.5 225V246M1360.5 225V244M1361.5 224V246M1362.5 225V244M1363.5 226V243M1364.5 227V244M1365.5 231V237M1366.5 227V241M1367.5 227V241M1368.5 228V241M1369.5 229V240M1370.5 229V239M1371.5 229V239M1372.5 230V238M1388.5 229V240M1389.5 226V242M1390.5 223V245M1391.5 221V248M1392.5 221V247M1393.5 221V246M1394.5 223V248M1395.5 222V247M1396.5 222V248M1397.5 223V246M1398.5 225V246M1399.5 223V244M1400.5 231V237M1401.5 230V237M1402.5 226V244M1403.5 225V242M1404.5 227V242M1405.5 227V240M1406.5 228V241M1407.5 229V240M1408.5 229V239M1409.5 230V237M1424.5 228V240M1425.5 225V242M1426.5 223V245M1427.5 222V249M1428.5 223V249M1429.5 222V246M1430.5 222V245M1431.5 221V247M1432.5 223V246M1433.5 224V246M1434.5 223V245M1435.5 230V237M1436.5 230V237M1437.5 226V243M1438.5 226V242M1439.5 226V242M1440.5 227V242M1441.5 227V240M1442.5 228V239M1443.5 229V239M1444.5 229V238M1445.5 230V237M1461.5 227V240M1462.5 224V245M1463.5 219V248M1464.5 220V247M1465.5 221V249M1466.5 219V248M1467.5 218V248M1468.5 221V247M1469.5 230V238M1470.5 229V238M1471.5 222V245M1472.5 223V245M1473.5 223V246M1474.5 224V243M1475.5 225V242M1476.5 225V243M1477.5 225V241M1478.5 226V241M1479.5 228V240M1480.5 229V238M1481.5 229V238' stroke='#6464dc' stroke-width='1' shape-rendering='crispEdges'/></svg><div class='a' style='left:1px;top:308px;width:1732px;height:75px;background:#fefe80;'></div><div class='a' style='left:1px;top:308px;width:1732px;height:1px;background:#c8c890;'></div><div class='a' style='left:1px;top:308px;width:2px;height:75px;background:#d8d890;'></div><div class='a' style='left:1px;top:382px;width:1732px;height:1px;background:#c8c890;'></div><div class='a' style='left:4px;top:311px;width:1729px;height:69px;background:#000;'></div><div class='a' style='left:5px;top:312px;width:95px;height:66px;background:#f7f8fc;'></div><div class='a' style='left:101px;top:312px;width:35px;height:66px;background:#f7f8fc;'></div><div class='a' style='left:136px;top:312px;width:1px;height:66px;background:#a0a0a0'></div><div class='a' style='left:137px;top:312px;width:1596px;height:66px;background:#c4c4c4;'></div><svg class='a' style='left:137px;top:313px' width='1596' height='65'><defs><pattern id='p3' width='16' height='16' patternUnits='userSpaceOnUse'><path d='M0 0h1v1h-1zM7 1h1v1h-1zM13 0h1v1h-1zM2 5h1v1h-1zM7 4h1v1h-1zM10 4h1v1h-1zM15 5h1v1h-1zM15 8h1v1h-1zM3 8h1v1h-1zM8 8h1v1h-1zM13 9h1v1h-1zM3 12h1v1h-1zM7 12h1v1h-1zM14 12h1v1h-1z' fill='rgba(40,40,90,0.07)'/></pattern></defs><rect width='1596' height='65' fill='url(#p3)'/></svg><div class='a' style='left:137px;top:312px;width:1596px;height:1px;background:#d4d4d4'></div><div class='a' style='left:5px;top:312px;width:18px;height:18px;background:#cdd9ef;border-top:1px solid #fff;border-left:1px solid #fff;border-right:1px solid #8c8c8c;border-bottom:1px solid #8c8c8c'></div><svg class='a' style='left:9px;top:316px' width='11' height='11'><path d='M2.5 2.5L8.5 8.5M8.5 2.5L2.5 8.5' stroke='#000' stroke-width='1.5'/></svg><div class='a' style='left:23px;top:312px;width:78px;height:18px;background:#cdd9ef;border-top:1px solid #fff;border-left:1px solid #fff;border-right:1px solid #8c8c8c;border-bottom:1px solid #8c8c8c'></div><div class='t' style='left:26px;top:316px;font-size:11px;'>Label Track</div><svg class='a' style='left:86px;top:318px' width='12' height='8'><polygon points='0,0 12,0 6,7' fill='#000'/></svg><div class='a' style='left:6px;top:360px;width:17px;height:18px;background:#cdd9ef;border-top:1px solid #fff;border-left:1px solid #fff;border-right:1px solid #8c8c8c;border-bottom:1px solid #8c8c8c'></div><svg class='a' style='left:9px;top:366px' width='12' height='8'><polygon points='0,7 12,7 6,0' fill='#000'/></svg><div class='a' style='left:23px;top:360px;width:59px;height:18px;background:#cdd9ef;border-top:1px solid #fff;border-left:1px solid #fff;border-right:1px solid #8c8c8c;border-bottom:1px solid #8c8c8c'></div><div class='t' style='left:23px;top:363.5px;width:59px;text-align:center;font-size:11px;padding-left:3px'>Select</div><div class='a' style='left:252px;top:312px;width:1px;height:14px;background:#000'></div><div class='a' style='left:252px;top:347px;width:1px;height:31px;background:#000'></div><div class='a' style='left:260px;top:316px;width:78px;height:21px;background:#c8c8f4;border:1px solid #000'></div><div class='t' style='left:267px;top:319px;font-size:16px'>01 Verse</div><svg class='a' style='left:245px;top:328px' width='16' height='18'><polygon points='4,0.5 6.5,0.5 6.5,4.5 8.5,4.5 8.5,0.5 11,0.5 14.5,8.5 11,16.5 8.5,16.5 8.5,12.5 6.5,12.5 6.5,16.5 4,16.5 0.5,8.5' fill='#d0d0fc' stroke='#000' stroke-width='1'/><circle cx='7.5' cy='8.5' r='4' fill='#c0c0f0' stroke='#000' stroke-width='1'/></svg><div class='a' style='left:406px;top:312px;width:1px;height:14px;background:#000'></div><div class='a' style='left:406px;top:347px;width:1px;height:31px;background:#000'></div><div class='a' style='left:414px;top:316px;width:115px;height:21px;background:#c8c8f4;border:1px solid #000'></div><div class='t' style='left:421px;top:319px;font-size:16px'>02 Pre Chorus</div><svg class='a' style='left:399px;top:328px' width='16' height='18'><polygon points='4,0.5 6.5,0.5 6.5,4.5 8.5,4.5 8.5,0.5 11,0.5 14.5,8.5 11,16.5 8.5,16.5 8.5,12.5 6.5,12.5 6.5,16.5 4,16.5 0.5,8.5' fill='#d0d0fc' stroke='#000' stroke-width='1'/><circle cx='7.5' cy='8.5' r='4' fill='#c0c0f0' stroke='#000' stroke-width='1'/></svg><div class='a' style='left:555px;top:312px;width:1px;height:14px;background:#000'></div><div class='a' style='left:555px;top:347px;width:1px;height:31px;background:#000'></div><div class='a' style='left:563px;top:316px;width:86px;height:21px;background:#c8c8f4;border:1px solid #000'></div><div class='t' style='left:570px;top:319px;font-size:16px'>03 Chorus</div><svg class='a' style='left:548px;top:328px' width='16' height='18'><polygon points='4,0.5 6.5,0.5 6.5,4.5 8.5,4.5 8.5,0.5 11,0.5 14.5,8.5 11,16.5 8.5,16.5 8.5,12.5 6.5,12.5 6.5,16.5 4,16.5 0.5,8.5' fill='#d0d0fc' stroke='#000' stroke-width='1'/><circle cx='7.5' cy='8.5' r='4' fill='#c0c0f0' stroke='#000' stroke-width='1'/></svg><div class='a' style='left:738px;top:312px;width:1px;height:14px;background:#000'></div><div class='a' style='left:738px;top:347px;width:1px;height:31px;background:#000'></div><div class='a' style='left:746px;top:316px;width:78px;height:21px;background:#c8c8f4;border:1px solid #000'></div><div class='t' style='left:753px;top:319px;font-size:16px'>04 Verse</div><svg class='a' style='left:731px;top:328px' width='16' height='18'><polygon points='4,0.5 6.5,0.5 6.5,4.5 8.5,4.5 8.5,0.5 11,0.5 14.5,8.5 11,16.5 8.5,16.5 8.5,12.5 6.5,12.5 6.5,16.5 4,16.5 0.5,8.5' fill='#d0d0fc' stroke='#000' stroke-width='1'/><circle cx='7.5' cy='8.5' r='4' fill='#c0c0f0' stroke='#000' stroke-width='1'/></svg><div class='a' style='left:881px;top:312px;width:1px;height:14px;background:#000'></div><div class='a' style='left:881px;top:347px;width:1px;height:31px;background:#000'></div><div class='a' style='left:889px;top:316px;width:115px;height:21px;background:#c8c8f4;border:1px solid #000'></div><div class='t' style='left:896px;top:319px;font-size:16px'>05 Pre Chorus</div><svg class='a' style='left:874px;top:328px' width='16' height='18'><polygon points='4,0.5 6.5,0.5 6.5,4.5 8.5,4.5 8.5,0.5 11,0.5 14.5,8.5 11,16.5 8.5,16.5 8.5,12.5 6.5,12.5 6.5,16.5 4,16.5 0.5,8.5' fill='#d0d0fc' stroke='#000' stroke-width='1'/><circle cx='7.5' cy='8.5' r='4' fill='#c0c0f0' stroke='#000' stroke-width='1'/></svg><div class='a' style='left:1030px;top:312px;width:1px;height:14px;background:#000'></div><div class='a' style='left:1030px;top:347px;width:1px;height:31px;background:#000'></div><div class='a' style='left:1038px;top:316px;width:90px;height:21px;background:#c8c8f4;border:1px solid #000'></div><div class='t' style='left:1045px;top:319px;font-size:16px'>06 Chorus</div><svg class='a' style='left:1023px;top:328px' width='16' height='18'><polygon points='4,0.5 6.5,0.5 6.5,4.5 8.5,4.5 8.5,0.5 11,0.5 14.5,8.5 11,16.5 8.5,16.5 8.5,12.5 6.5,12.5 6.5,16.5 4,16.5 0.5,8.5' fill='#d0d0fc' stroke='#000' stroke-width='1'/><circle cx='7.5' cy='8.5' r='4' fill='#c0c0f0' stroke='#000' stroke-width='1'/></svg><div class='a' style='left:1213px;top:312px;width:1px;height:14px;background:#000'></div><div class='a' style='left:1213px;top:347px;width:1px;height:31px;background:#000'></div><div class='a' style='left:1221px;top:316px;width:96px;height:21px;background:#c8c8f4;border:1px solid #000'></div><div class='t' style='left:1228px;top:319px;font-size:16px'>07 Middle 8</div><svg class='a' style='left:1206px;top:328px' width='16' height='18'><polygon points='4,0.5 6.5,0.5 6.5,4.5 8.5,4.5 8.5,0.5 11,0.5 14.5,8.5 11,16.5 8.5,16.5 8.5,12.5 6.5,12.5 6.5,16.5 4,16.5 0.5,8.5' fill='#d0d0fc' stroke='#000' stroke-width='1'/><circle cx='7.5' cy='8.5' r='4' fill='#c0c0f0' stroke='#000' stroke-width='1'/></svg><div class='a' style='left:1345px;top:312px;width:1px;height:14px;background:#3a1010'></div><div class='a' style='left:1345px;top:347px;width:1px;height:31px;background:#3a1010'></div><div class='a' style='left:1353px;top:316px;width:74px;height:21px;background:#c8c8f4;border:1px solid #000'></div><div class='t' style='left:1360px;top:319px;font-size:16px'>08 Outro</div><svg class='a' style='left:1338px;top:328px' width='16' height='18'><polygon points='4,0.5 6.5,0.5 6.5,4.5 8.5,4.5 8.5,0.5 11,0.5 14.5,8.5 11,16.5 8.5,16.5 8.5,12.5 6.5,12.5 6.5,16.5 4,16.5 0.5,8.5' fill='#d0d0fc' stroke='#000' stroke-width='1'/><circle cx='7.5' cy='8.5' r='4' fill='#c0c0f0' stroke='#000' stroke-width='1'/></svg><div class='a' style='left:1345px;top:329px;width:1px;height:16px;background:#3a1010'></div><div class='a' style='left:226px;top:292px;width:1230px;height:106px;border:10px solid #fec917'></div><div class='a' style='left:0px;top:943px;width:1733px;height:17px;background:#f0f0f0;'></div><svg class='a' style='left:0px;top:943px' width='153' height='16'><defs><pattern id='p4' width='16' height='16' patternUnits='userSpaceOnUse'><path d='M0 0h1v1h-1zM7 1h1v1h-1zM13 0h1v1h-1zM2 5h1v1h-1zM7 4h1v1h-1zM10 4h1v1h-1zM15 5h1v1h-1zM15 8h1v1h-1zM3 8h1v1h-1zM8 8h1v1h-1zM13 9h1v1h-1zM3 12h1v1h-1zM7 12h1v1h-1zM14 12h1v1h-1z' fill='rgba(0,0,0,0.07)'/></pattern></defs><rect width='153' height='16' fill='url(#p4)'/></svg><div class='a' style='left:153px;top:944px;width:1580px;height:15px;background:#cdcdcd;'></div><svg class='a' style='left:139px;top:946px' width='10' height='11'><path d='M7 2.5 L3.5 6 L7 9.5' stroke='#333' stroke-width='2.2' fill='none'/></svg><div class='a' style='left:0px;top:959px;width:1733px;height:2px;background:#d2d2d2'></div><div class='a' style='left:0px;top:961px;width:1733px;height:55px;background:#f7f8fc;'></div><div class='a' style='left:0px;top:1016px;width:1733px;height:1px;background:#c8c8c8'></div><div class='a' style='left:0px;top:962px;width:10px;height:54px;border-left:1px solid #bdbdbd;border-right:1px solid #bdbdbd;'></div><div class='a' style='left:4px;top:967px;width:4px;height:1px;background:#a0a0a0'></div><div class='a' style='left:4px;top:971px;width:4px;height:1px;background:#a0a0a0'></div><div class='a' style='left:4px;top:975px;width:4px;height:1px;background:#a0a0a0'></div><div class='a' style='left:4px;top:979px;width:4px;height:1px;background:#a0a0a0'></div><div class='a' style='left:4px;top:983px;width:4px;height:1px;background:#a0a0a0'></div><div class='a' style='left:4px;top:987px;width:4px;height:1px;background:#a0a0a0'></div><div class='a' style='left:4px;top:991px;width:4px;height:1px;background:#a0a0a0'></div><div class='a' style='left:4px;top:995px;width:4px;height:1px;background:#a0a0a0'></div><div class='a' style='left:4px;top:999px;width:4px;height:1px;background:#a0a0a0'></div><div class='a' style='left:4px;top:1003px;width:4px;height:1px;background:#a0a0a0'></div><div class='a' style='left:4px;top:1007px;width:4px;height:1px;background:#a0a0a0'></div><div class='a' style='left:4px;top:1011px;width:4px;height:1px;background:#a0a0a0'></div><div class='t' style='left:17px;top:972.5px;font-size:12px;'>Project Rate (Hz)</div><div class='a' style='left:115px;top:969px;width:1px;height:16px;background:#a0a0a0'></div><div class='a' style='left:115px;top:993px;width:1px;height:16px;background:#a0a0a0'></div><div class='t' style='left:122px;top:972.5px;font-size:12px;'>Snap-To</div><div class='a' style='left:201px;top:969px;width:1px;height:16px;background:#a0a0a0'></div><div class='a' style='left:201px;top:993px;width:1px;height:16px;background:#a0a0a0'></div><div class='t' style='left:208px;top:972.5px;font-size:12px;'>Audio Position</div><div class='a' style='left:362px;top:969px;width:1px;height:16px;background:#a0a0a0'></div><div class='a' style='left:362px;top:993px;width:1px;height:16px;background:#a0a0a0'></div><div class='a' style='left:17px;top:990px;width:80px;height:23px;background:#fff;border:1px solid #7a7a7a;overflow:hidden'><div class='a' style='left:0;top:0;width:58px;height:21px;overflow:hidden'><div class='t' style='left:6px;top:5.0px;font-size:12px;'>44100</div></div></div><svg class='a' style='left:83px;top:998px' width='10' height='6'><path d='M1 1 L5 5 L9 1' stroke='#333' stroke-width='1.1' fill='none'/></svg><div class='a' style='left:122px;top:990px;width:73px;height:23px;background:#e1e1e1;border:1px solid #adadad;overflow:hidden'><div class='a' style='left:0;top:0;width:51px;height:21px;overflow:hidden'><div class='t' style='left:4px;top:5.0px;font-size:12px;'>Off</div></div></div><svg class='a' style='left:181px;top:998px' width='10' height='6'><path d='M1 1 L5 5 L9 1' stroke='#333' stroke-width='1.1' fill='none'/></svg><div class='a' style='left:369px;top:966px;width:300px;height:23px;background:#e1e1e1;border:1px solid #adadad;overflow:hidden'><div class='a' style='left:0;top:0;width:278px;height:21px;overflow:hidden'><div class='t' style='left:3px;top:5.0px;font-size:12px;'>Start and End of Selection</div></div></div><svg class='a' style='left:655px;top:974px' width='10' height='6'><path d='M1 1 L5 5 L9 1' stroke='#333' stroke-width='1.1' fill='none'/></svg><div class='a' style='left:208px;top:990px;width:147px;height:21px;background:#d0d0d2;border-top:2px solid #6a6a6a;border-left:2px solid #6a6a6a;border-bottom:1px solid #e4e4e4;border-right:1px solid #e4e4e4'></div><div class='a' style='left:231px;top:992px;width:13px;height:18px;background:#b8bcc8;'></div><div class='a' style='left:264px;top:992px;width:17px;height:18px;background:#b8bcc8;'></div><div class='a' style='left:301px;top:992px;width:3px;height:18px;background:#b8bcc8;'></div><div class='a' style='left:334px;top:992px;width:11px;height:18px;background:#b8bcc8;'></div><div class='a' style='left:345px;top:992px;width:9px;height:18px;background:#b8bcc8;'></div><div class='a' style='left:345px;top:992px;width:1px;height:17px;background:#ffffff'></div><div class='t' style='left:212px;top:994.5px;font-size:13px;color:#1212c8'>0</div><div class='t' style='left:222.3px;top:994.5px;font-size:13px;color:#1212c8'>0</div><div class='t' style='left:234px;top:994.5px;font-size:13px;color:#1212c8'>h</div><div class='t' style='left:245.6px;top:994.5px;font-size:13px;color:#1212c8'>0</div><div class='t' style='left:255.4px;top:994.5px;font-size:13px;color:#1212c8'>3</div><div class='t' style='left:267px;top:994.5px;font-size:13px;color:#1212c8'>m</div><div class='t' style='left:282px;top:994.5px;font-size:13px;color:#1212c8'>3</div><div class='t' style='left:293px;top:994.5px;font-size:13px;color:#1212c8'>1</div><div class='t' style='left:301.5px;top:994.5px;font-size:13px;color:#1212c8'>.</div><div class='t' style='left:305.4px;top:994.5px;font-size:13px;color:#1212c8'>0</div><div class='t' style='left:315.7px;top:994.5px;font-size:13px;color:#1212c8'>7</div><div class='t' style='left:325.5px;top:994.5px;font-size:13px;color:#1212c8'>0</div><div class='t' style='left:337.2px;top:994.5px;font-size:13px;color:#1212c8'>s</div><svg class='a' style='left:346px;top:999px' width='8' height='5'><polygon points='0,0 8,0 4,4.5' fill='#000'/></svg><div class='a' style='left:369px;top:990px;width:147px;height:21px;background:#d0d0d2;border-top:2px solid #6a6a6a;border-left:2px solid #6a6a6a;border-bottom:1px solid #e4e4e4;border-right:1px solid #e4e4e4'></div><div class='a' style='left:392px;top:992px;width:13px;height:18px;background:#b8bcc8;'></div><div class='a' style='left:425px;top:992px;width:17px;height:18px;background:#b8bcc8;'></div><div class='a' style='left:462px;top:992px;width:3px;height:18px;background:#b8bcc8;'></div><div class='a' style='left:495px;top:992px;width:11px;height:18px;background:#b8bcc8;'></div><div class='a' style='left:506px;top:992px;width:9px;height:18px;background:#b8bcc8;'></div><div class='a' style='left:506px;top:992px;width:1px;height:17px;background:#ffffff'></div><div class='t' style='left:373px;top:994.5px;font-size:13px;color:#1212c8'>0</div><div class='t' style='left:383.3px;top:994.5px;font-size:13px;color:#1212c8'>0</div><div class='t' style='left:395px;top:994.5px;font-size:13px;color:#1212c8'>h</div><div class='t' style='left:406.6px;top:994.5px;font-size:13px;color:#1212c8'>0</div><div class='t' style='left:416.4px;top:994.5px;font-size:13px;color:#1212c8'>3</div><div class='t' style='left:428px;top:994.5px;font-size:13px;color:#1212c8'>m</div><div class='t' style='left:443px;top:994.5px;font-size:13px;color:#1212c8'>3</div><div class='t' style='left:454px;top:994.5px;font-size:13px;color:#1212c8'>1</div><div class='t' style='left:462.5px;top:994.5px;font-size:13px;color:#1212c8'>.</div><div class='t' style='left:466.4px;top:994.5px;font-size:13px;color:#1212c8'>0</div><div class='t' style='left:476.7px;top:994.5px;font-size:13px;color:#1212c8'>7</div><div class='t' style='left:486.5px;top:994.5px;font-size:13px;color:#1212c8'>0</div><div class='t' style='left:498.2px;top:994.5px;font-size:13px;color:#1212c8'>s</div><svg class='a' style='left:507px;top:999px' width='8' height='5'><polygon points='0,0 8,0 4,4.5' fill='#000'/></svg><div class='a' style='left:522px;top:990px;width:147px;height:21px;background:#d0d0d2;border-top:2px solid #6a6a6a;border-left:2px solid #6a6a6a;border-bottom:1px solid #e4e4e4;border-right:1px solid #e4e4e4'></div><div class='a' style='left:545px;top:992px;width:13px;height:18px;background:#b8bcc8;'></div><div class='a' style='left:578px;top:992px;width:17px;height:18px;background:#b8bcc8;'></div><div class='a' style='left:615px;top:992px;width:3px;height:18px;background:#b8bcc8;'></div><div class='a' style='left:648px;top:992px;width:11px;height:18px;background:#b8bcc8;'></div><div class='a' style='left:659px;top:992px;width:9px;height:18px;background:#b8bcc8;'></div><div class='a' style='left:659px;top:992px;width:1px;height:17px;background:#ffffff'></div><div class='t' style='left:526px;top:994.5px;font-size:13px;color:#1212c8'>0</div><div class='t' style='left:536.3px;top:994.5px;font-size:13px;color:#1212c8'>0</div><div class='t' style='left:548px;top:994.5px;font-size:13px;color:#1212c8'>h</div><div class='t' style='left:559.6px;top:994.5px;font-size:13px;color:#1212c8'>0</div><div class='t' style='left:569.4px;top:994.5px;font-size:13px;color:#1212c8'>3</div><div class='t' style='left:581px;top:994.5px;font-size:13px;color:#1212c8'>m</div><div class='t' style='left:596px;top:994.5px;font-size:13px;color:#1212c8'>3</div><div class='t' style='left:607px;top:994.5px;font-size:13px;color:#1212c8'>1</div><div class='t' style='left:615.5px;top:994.5px;font-size:13px;color:#1212c8'>.</div><div class='t' style='left:619.4px;top:994.5px;font-size:13px;color:#1212c8'>0</div><div class='t' style='left:629.7px;top:994.5px;font-size:13px;color:#1212c8'>7</div><div class='t' style='left:639.5px;top:994.5px;font-size:13px;color:#1212c8'>0</div><div class='t' style='left:651.2px;top:994.5px;font-size:13px;color:#1212c8'>s</div><svg class='a' style='left:660px;top:999px' width='8' height='5'><polygon points='0,0 8,0 4,4.5' fill='#000'/></svg><div class='a' style='left:0px;top:1017px;width:1733px;height:23px;background:#f0f0f0;'></div><svg class='a' style='left:0px;top:1018px' width='1733' height='22'><defs><pattern id='p5' width='16' height='16' patternUnits='userSpaceOnUse'><path d='M0 0h1v1h-1zM7 1h1v1h-1zM13 0h1v1h-1zM2 5h1v1h-1zM7 4h1v1h-1zM10 4h1v1h-1zM15 5h1v1h-1zM15 8h1v1h-1zM3 8h1v1h-1zM8 8h1v1h-1zM13 9h1v1h-1zM3 12h1v1h-1zM7 12h1v1h-1zM14 12h1v1h-1z' fill='rgba(0,0,0,0.07)'/></pattern></defs><rect width='1733' height='22' fill='url(#p5)'/></svg><div class='a' style='left:9px;top:1019px;width:1px;height:21px;background:#d0d0d0'></div><div class='a' style='left:180px;top:1019px;width:1px;height:21px;background:#d0d0d0'></div><div class='t' style='left:14px;top:1024px;font-size:12px;'>Stopped.</div></body></html>
